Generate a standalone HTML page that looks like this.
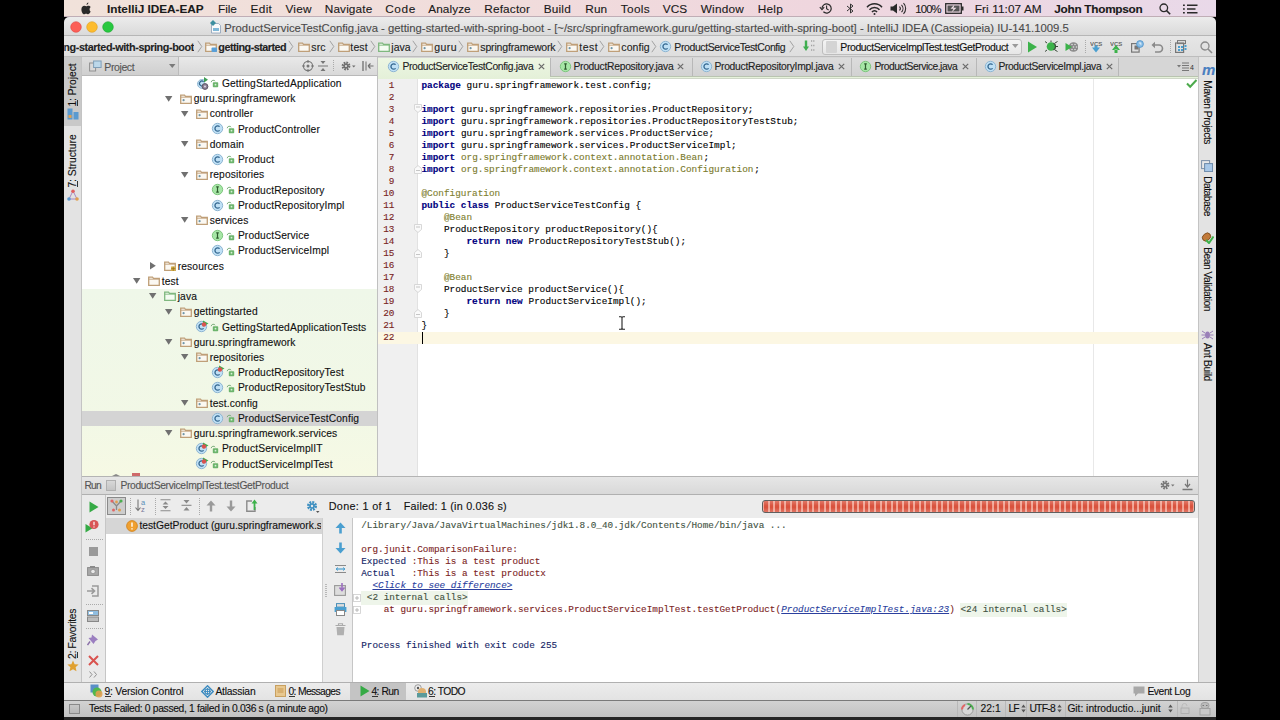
<!DOCTYPE html>
<html><head><meta charset="utf-8"><style>
html,body{margin:0;padding:0;}
body{width:1280px;height:720px;background:#000;position:relative;overflow:hidden;}
body div, body svg{position:absolute;}
.t{white-space:pre;z-index:2;-webkit-text-stroke:0.12px currentColor;}
body svg{z-index:3;}
</style></head><body>
<div style="left:64px;top:717px;width:1152px;height:3px;background:#262626;"></div>
<div style="left:64px;top:0px;width:1152px;height:17px;background:linear-gradient(90deg,#f1e2da 0%,#f1dcdc 40%,#efd6de 65%,#e9d9e9 100%);"></div>
<div style="left:64px;top:16px;width:1152px;height:1px;background:#c0aeb6;"></div>
<div style="left:64px;top:17px;width:1152px;height:19px;background:linear-gradient(#ececec,#d9d9d9);border-radius:5px 5px 0 0;"></div>
<div style="left:64px;top:35px;width:1152px;height:1px;background:#b6b6b6;"></div>
<div style="left:64px;top:36px;width:1152px;height:21px;background:linear-gradient(#e6e6e6,#dedede);"></div>
<div style="left:64px;top:56px;width:1152px;height:1px;background:#bdbdbd;"></div>
<div style="left:64px;top:57px;width:18px;height:625px;background:#e3e3e3;"></div>
<div style="left:81px;top:57px;width:1px;height:625px;background:#c4c4c4;"></div>
<div style="left:64px;top:57px;width:17px;height:69px;background:#c9c9c9;"></div>
<div style="left:1198px;top:57px;width:18px;height:625px;background:#e3e3e3;"></div>
<div style="left:1198px;top:57px;width:1px;height:625px;background:#c4c4c4;"></div>
<div style="left:82px;top:57px;width:296px;height:18px;background:linear-gradient(#e9e9e9,#d9d9d9);"></div>
<div style="left:82px;top:75px;width:296px;height:1px;background:#b9b9b9;"></div>
<div style="left:82px;top:57px;width:96px;height:18px;background:linear-gradient(#dedede,#cfcfcf);"></div>
<div style="left:178px;top:57px;width:1px;height:18px;background:#bcbcbc;"></div>
<div style="left:82px;top:76px;width:296px;height:400px;background:#ffffff;"></div>
<div style="left:82px;top:288.5px;width:296px;height:187.5px;background:linear-gradient(#eff7e9,#f2f8e6 70%,#f6f9e4);"></div>
<div style="left:82px;top:411.2px;width:296px;height:15.2px;background:#d4d4d4;"></div>
<div style="left:377px;top:57px;width:1px;height:420px;background:#c0c0c0;"></div>
<div style="left:378px;top:57px;width:820px;height:19px;background:#d6d6d6;"></div>
<div style="left:378px;top:76px;width:820px;height:3px;background:#e7f2dc;"></div>
<div style="left:378px;top:78px;width:820px;height:1px;background:#cfd7c8;"></div>
<div style="left:378px;top:79px;width:820px;height:397px;background:#ffffff;"></div>
<div style="left:378px;top:79px;width:39.5px;height:397px;background:#f0f0f0;"></div>
<div style="left:417px;top:79px;width:1px;height:397px;background:#e2e2e2;"></div>
<div style="left:1093px;top:79px;width:1px;height:397px;background:#e8e8e8;"></div>
<div style="left:378px;top:331.5px;width:820px;height:12.5px;background:#fcf7e3;"></div>
<div style="left:82px;top:476px;width:1116px;height:1px;background:#b4b4b4;"></div>
<div style="left:82px;top:477px;width:1116px;height:17.5px;background:linear-gradient(#e6e6e6,#d8d8d8);"></div>
<div style="left:82px;top:494px;width:1116px;height:1px;background:#b0b0b0;"></div>
<div style="left:82px;top:495px;width:23px;height:187px;background:#eaeaea;"></div>
<div style="left:105px;top:495px;width:1px;height:187px;background:#c6c6c6;"></div>
<div style="left:106px;top:495px;width:1092px;height:23px;background:#ececec;"></div>
<div style="left:106px;top:518px;width:216px;height:164px;background:#ffffff;"></div>
<div style="left:106px;top:518px;width:216px;height:15.5px;background:#d6d6d6;"></div>
<div style="left:322px;top:518px;width:1px;height:164px;background:#cfcfcf;"></div>
<div style="left:323px;top:518px;width:30px;height:164px;background:#ececec;"></div>
<div style="left:352px;top:518px;width:1px;height:164px;background:#c6c6c6;"></div>
<div style="left:353px;top:518px;width:845px;height:164px;background:#ffffff;"></div>
<div style="left:64px;top:682px;width:1152px;height:1px;background:#b0b0b0;"></div>
<div style="left:64px;top:683px;width:1152px;height:17px;background:linear-gradient(#ececec,#e3e3e3);"></div>
<div style="left:350px;top:683px;width:56px;height:17px;background:#c4c4c4;"></div>
<div style="left:64px;top:700px;width:1152px;height:1px;background:#7a7a7a;"></div>
<div style="left:64px;top:701px;width:1152px;height:16px;background:linear-gradient(#d2d2d2,#c2c2c2);"></div>
<div class="t" style="left:106.99px;top:2.40px;font-family:'Liberation Sans', sans-serif;font-size:11.8px;line-height:14px;color:#1a1a1a;font-weight:700;letter-spacing:-0.019px;">IntelliJ IDEA-EAP</div>
<div class="t" style="left:217.99px;top:2.40px;font-family:'Liberation Sans', sans-serif;font-size:11.8px;line-height:14px;color:#1a1a1a;letter-spacing:-0.033px;">File</div>
<div class="t" style="left:250.49px;top:2.40px;font-family:'Liberation Sans', sans-serif;font-size:11.8px;line-height:14px;color:#1a1a1a;letter-spacing:0.363px;">Edit</div>
<div class="t" style="left:285.49px;top:2.40px;font-family:'Liberation Sans', sans-serif;font-size:11.8px;line-height:14px;color:#1a1a1a;letter-spacing:0.186px;">View</div>
<div class="t" style="left:324.79px;top:2.40px;font-family:'Liberation Sans', sans-serif;font-size:11.8px;line-height:14px;color:#1a1a1a;letter-spacing:0.122px;">Navigate</div>
<div class="t" style="left:385.29px;top:2.40px;font-family:'Liberation Sans', sans-serif;font-size:11.8px;line-height:14px;color:#1a1a1a;letter-spacing:0.571px;">Code</div>
<div class="t" style="left:428.29px;top:2.40px;font-family:'Liberation Sans', sans-serif;font-size:11.8px;line-height:14px;color:#1a1a1a;letter-spacing:0.072px;">Analyze</div>
<div class="t" style="left:484.29px;top:2.40px;font-family:'Liberation Sans', sans-serif;font-size:11.8px;line-height:14px;color:#1a1a1a;letter-spacing:0.160px;">Refactor</div>
<div class="t" style="left:543.79px;top:2.40px;font-family:'Liberation Sans', sans-serif;font-size:11.8px;line-height:14px;color:#1a1a1a;letter-spacing:0.170px;">Build</div>
<div class="t" style="left:585.29px;top:2.40px;font-family:'Liberation Sans', sans-serif;font-size:11.8px;line-height:14px;color:#1a1a1a;letter-spacing:0.130px;">Run</div>
<div class="t" style="left:620.79px;top:2.40px;font-family:'Liberation Sans', sans-serif;font-size:11.8px;line-height:14px;color:#1a1a1a;letter-spacing:0.342px;">Tools</div>
<div class="t" style="left:662.79px;top:2.40px;font-family:'Liberation Sans', sans-serif;font-size:11.8px;line-height:14px;color:#1a1a1a;letter-spacing:0.075px;">VCS</div>
<div class="t" style="left:700.79px;top:2.40px;font-family:'Liberation Sans', sans-serif;font-size:11.8px;line-height:14px;color:#1a1a1a;letter-spacing:0.189px;">Window</div>
<div class="t" style="left:757.79px;top:2.40px;font-family:'Liberation Sans', sans-serif;font-size:11.8px;line-height:14px;color:#1a1a1a;letter-spacing:0.217px;">Help</div>
<div class="t" style="left:915.32px;top:2.40px;font-family:'Liberation Sans', sans-serif;font-size:11.3px;line-height:14px;color:#1a1a1a;letter-spacing:-0.850px;">100%</div>
<div class="t" style="left:974.79px;top:2.40px;font-family:'Liberation Sans', sans-serif;font-size:11.8px;line-height:14px;color:#1a1a1a;letter-spacing:0.083px;">Fri 11:07 AM</div>
<div class="t" style="left:1054.29px;top:2.40px;font-family:'Liberation Sans', sans-serif;font-size:11.8px;line-height:14px;color:#1a1a1a;font-weight:700;letter-spacing:-0.278px;">John Thompson</div>
<div class="t" style="left:224.32px;top:20.70px;font-family:'Liberation Sans', sans-serif;font-size:11.3px;line-height:14px;color:#4a4a4a;letter-spacing:-0.006px;">ProductServiceTestConfig.java - getting-started-with-spring-boot - [~/src/springframework.guru/getting-started-with-spring-boot] - IntelliJ IDEA (Cassiopeia) IU-141.1009.5</div>
<div class="t" style="left:63.35px;top:39.60px;font-family:'Liberation Sans', sans-serif;font-size:10.8px;line-height:14px;color:#222;font-weight:700;letter-spacing:-0.406px;clip-path:inset(0 0 0 1px);">ng-started-with-spring-boot</div>
<div class="t" style="left:218.35px;top:39.60px;font-family:'Liberation Sans', sans-serif;font-size:10.8px;line-height:14px;color:#222;font-weight:700;letter-spacing:-0.521px;">getting-started</div>
<div class="t" style="left:311.37px;top:39.60px;font-family:'Liberation Sans', sans-serif;font-size:10.5px;line-height:14px;color:#222;letter-spacing:0.130px;">src</div>
<div class="t" style="left:350.37px;top:39.60px;font-family:'Liberation Sans', sans-serif;font-size:10.5px;line-height:14px;color:#222;letter-spacing:0.107px;">test</div>
<div class="t" style="left:391.37px;top:39.60px;font-family:'Liberation Sans', sans-serif;font-size:10.5px;line-height:14px;color:#222;letter-spacing:-0.002px;">java</div>
<div class="t" style="left:434.37px;top:39.60px;font-family:'Liberation Sans', sans-serif;font-size:10.5px;line-height:14px;color:#222;letter-spacing:0.415px;">guru</div>
<div class="t" style="left:480.37px;top:39.60px;font-family:'Liberation Sans', sans-serif;font-size:10.5px;line-height:14px;color:#222;letter-spacing:-0.168px;">springframework</div>
<div class="t" style="left:579.37px;top:39.60px;font-family:'Liberation Sans', sans-serif;font-size:10.5px;line-height:14px;color:#222;letter-spacing:0.441px;">test</div>
<div class="t" style="left:621.37px;top:39.60px;font-family:'Liberation Sans', sans-serif;font-size:10.5px;line-height:14px;color:#222;letter-spacing:0.046px;">config</div>
<div class="t" style="left:674.37px;top:39.60px;font-family:'Liberation Sans', sans-serif;font-size:10.5px;line-height:14px;color:#222;letter-spacing:-0.415px;">ProductServiceTestConfig</div>
<div class="t" style="left:840.37px;top:39.60px;font-family:'Liberation Sans', sans-serif;font-size:10.5px;line-height:14px;color:#111;letter-spacing:-0.416px;">ProductServiceImplTest.testGetProduct</div>
<div class="t" style="left:104.37px;top:59.70px;font-family:'Liberation Sans', sans-serif;font-size:10.5px;line-height:14px;color:#555;letter-spacing:-0.405px;">Project</div>
<div class="t" style="left:402.38px;top:60.00px;font-family:'Liberation Sans', sans-serif;font-size:10.3px;line-height:14px;color:#222;letter-spacing:-0.321px;">ProductServiceTestConfig.java</div>
<div class="t" style="left:573.38px;top:60.00px;font-family:'Liberation Sans', sans-serif;font-size:10.3px;line-height:14px;color:#222;letter-spacing:-0.260px;">ProductRepository.java</div>
<div class="t" style="left:714.38px;top:60.00px;font-family:'Liberation Sans', sans-serif;font-size:10.3px;line-height:14px;color:#222;letter-spacing:-0.267px;">ProductRepositoryImpl.java</div>
<div class="t" style="left:874.38px;top:60.00px;font-family:'Liberation Sans', sans-serif;font-size:10.3px;line-height:14px;color:#222;letter-spacing:-0.463px;">ProductService.java</div>
<div class="t" style="left:998.38px;top:60.00px;font-family:'Liberation Sans', sans-serif;font-size:10.3px;line-height:14px;color:#222;letter-spacing:-0.354px;">ProductServiceImpl.java</div>
<div class="t" style="left:221.88px;top:77.00px;font-family:'Liberation Sans', sans-serif;font-size:10.25px;line-height:14px;color:#111;letter-spacing:0.14px;">GettingStartedApplication</div>
<div class="t" style="left:193.69px;top:92.22px;font-family:'Liberation Sans', sans-serif;font-size:10.25px;line-height:14px;color:#111;letter-spacing:0.14px;">guru.springframework</div>
<div class="t" style="left:209.69px;top:107.44px;font-family:'Liberation Sans', sans-serif;font-size:10.25px;line-height:14px;color:#111;letter-spacing:0.14px;">controller</div>
<div class="t" style="left:237.88px;top:122.66px;font-family:'Liberation Sans', sans-serif;font-size:10.25px;line-height:14px;color:#111;letter-spacing:0.14px;">ProductController</div>
<div class="t" style="left:209.69px;top:137.88px;font-family:'Liberation Sans', sans-serif;font-size:10.25px;line-height:14px;color:#111;letter-spacing:0.14px;">domain</div>
<div class="t" style="left:237.88px;top:153.10px;font-family:'Liberation Sans', sans-serif;font-size:10.25px;line-height:14px;color:#111;letter-spacing:0.14px;">Product</div>
<div class="t" style="left:209.69px;top:168.32px;font-family:'Liberation Sans', sans-serif;font-size:10.25px;line-height:14px;color:#111;letter-spacing:0.14px;">repositories</div>
<div class="t" style="left:237.88px;top:183.54px;font-family:'Liberation Sans', sans-serif;font-size:10.25px;line-height:14px;color:#111;letter-spacing:0.14px;">ProductRepository</div>
<div class="t" style="left:237.88px;top:198.76px;font-family:'Liberation Sans', sans-serif;font-size:10.25px;line-height:14px;color:#111;letter-spacing:0.14px;">ProductRepositoryImpl</div>
<div class="t" style="left:209.69px;top:213.98px;font-family:'Liberation Sans', sans-serif;font-size:10.25px;line-height:14px;color:#111;letter-spacing:0.14px;">services</div>
<div class="t" style="left:237.88px;top:229.20px;font-family:'Liberation Sans', sans-serif;font-size:10.25px;line-height:14px;color:#111;letter-spacing:0.14px;">ProductService</div>
<div class="t" style="left:237.88px;top:244.42px;font-family:'Liberation Sans', sans-serif;font-size:10.25px;line-height:14px;color:#111;letter-spacing:0.14px;">ProductServiceImpl</div>
<div class="t" style="left:177.69px;top:259.64px;font-family:'Liberation Sans', sans-serif;font-size:10.25px;line-height:14px;color:#111;letter-spacing:0.14px;">resources</div>
<div class="t" style="left:161.69px;top:274.86px;font-family:'Liberation Sans', sans-serif;font-size:10.25px;line-height:14px;color:#111;letter-spacing:0.14px;">test</div>
<div class="t" style="left:177.69px;top:290.08px;font-family:'Liberation Sans', sans-serif;font-size:10.25px;line-height:14px;color:#111;letter-spacing:0.14px;">java</div>
<div class="t" style="left:193.69px;top:305.30px;font-family:'Liberation Sans', sans-serif;font-size:10.25px;line-height:14px;color:#111;letter-spacing:0.14px;">gettingstarted</div>
<div class="t" style="left:221.88px;top:320.52px;font-family:'Liberation Sans', sans-serif;font-size:10.25px;line-height:14px;color:#111;letter-spacing:0.14px;">GettingStartedApplicationTests</div>
<div class="t" style="left:193.69px;top:335.74px;font-family:'Liberation Sans', sans-serif;font-size:10.25px;line-height:14px;color:#111;letter-spacing:0.14px;">guru.springframework</div>
<div class="t" style="left:209.69px;top:350.96px;font-family:'Liberation Sans', sans-serif;font-size:10.25px;line-height:14px;color:#111;letter-spacing:0.14px;">repositories</div>
<div class="t" style="left:237.88px;top:366.18px;font-family:'Liberation Sans', sans-serif;font-size:10.25px;line-height:14px;color:#111;letter-spacing:0.14px;">ProductRepositoryTest</div>
<div class="t" style="left:237.88px;top:381.40px;font-family:'Liberation Sans', sans-serif;font-size:10.25px;line-height:14px;color:#111;letter-spacing:0.14px;">ProductRepositoryTestStub</div>
<div class="t" style="left:209.69px;top:396.62px;font-family:'Liberation Sans', sans-serif;font-size:10.25px;line-height:14px;color:#111;letter-spacing:0.14px;">test.config</div>
<div class="t" style="left:237.88px;top:411.84px;font-family:'Liberation Sans', sans-serif;font-size:10.25px;line-height:14px;color:#111;letter-spacing:0.14px;">ProductServiceTestConfig</div>
<div class="t" style="left:193.69px;top:427.06px;font-family:'Liberation Sans', sans-serif;font-size:10.25px;line-height:14px;color:#111;letter-spacing:0.14px;">guru.springframework.services</div>
<div class="t" style="left:221.88px;top:442.28px;font-family:'Liberation Sans', sans-serif;font-size:10.25px;line-height:14px;color:#111;letter-spacing:0.14px;">ProductServiceImplIT</div>
<div class="t" style="left:221.88px;top:457.50px;font-family:'Liberation Sans', sans-serif;font-size:10.25px;line-height:14px;color:#111;letter-spacing:0.14px;">ProductServiceImplTest</div>
<div class="t" style="left:421.44px;top:78.99px;font-family:'Liberation Mono', monospace;font-size:9.4px;line-height:14px;color:#000080;font-weight:700;">package</div>
<div class="t" style="left:460.92px;top:78.99px;font-family:'Liberation Mono', monospace;font-size:9.4px;line-height:14px;color:#000;"> guru.springframework.test.config;</div>
<div class="t" style="left:388.84px;top:78.99px;font-family:'Liberation Mono', monospace;font-size:9.33px;line-height:14px;color:#7a2424;">1</div>
<div class="t" style="left:388.84px;top:90.99px;font-family:'Liberation Mono', monospace;font-size:9.33px;line-height:14px;color:#7a2424;">2</div>
<div class="t" style="left:421.44px;top:102.99px;font-family:'Liberation Mono', monospace;font-size:9.4px;line-height:14px;color:#000080;font-weight:700;">import</div>
<div class="t" style="left:455.28px;top:102.99px;font-family:'Liberation Mono', monospace;font-size:9.4px;line-height:14px;color:#000;"> guru.springframework.repositories.ProductRepository;</div>
<div class="t" style="left:388.84px;top:102.99px;font-family:'Liberation Mono', monospace;font-size:9.33px;line-height:14px;color:#7a2424;">3</div>
<div class="t" style="left:421.44px;top:114.99px;font-family:'Liberation Mono', monospace;font-size:9.4px;line-height:14px;color:#000080;font-weight:700;">import</div>
<div class="t" style="left:455.28px;top:114.99px;font-family:'Liberation Mono', monospace;font-size:9.4px;line-height:14px;color:#000;"> guru.springframework.repositories.ProductRepositoryTestStub;</div>
<div class="t" style="left:388.84px;top:114.99px;font-family:'Liberation Mono', monospace;font-size:9.33px;line-height:14px;color:#7a2424;">4</div>
<div class="t" style="left:421.44px;top:126.99px;font-family:'Liberation Mono', monospace;font-size:9.4px;line-height:14px;color:#000080;font-weight:700;">import</div>
<div class="t" style="left:455.28px;top:126.99px;font-family:'Liberation Mono', monospace;font-size:9.4px;line-height:14px;color:#000;"> guru.springframework.services.ProductService;</div>
<div class="t" style="left:388.84px;top:126.99px;font-family:'Liberation Mono', monospace;font-size:9.33px;line-height:14px;color:#7a2424;">5</div>
<div class="t" style="left:421.44px;top:138.99px;font-family:'Liberation Mono', monospace;font-size:9.4px;line-height:14px;color:#000080;font-weight:700;">import</div>
<div class="t" style="left:455.28px;top:138.99px;font-family:'Liberation Mono', monospace;font-size:9.4px;line-height:14px;color:#000;"> guru.springframework.services.ProductServiceImpl;</div>
<div class="t" style="left:388.84px;top:138.99px;font-family:'Liberation Mono', monospace;font-size:9.33px;line-height:14px;color:#7a2424;">6</div>
<div class="t" style="left:421.44px;top:150.99px;font-family:'Liberation Mono', monospace;font-size:9.4px;line-height:14px;color:#000080;font-weight:700;">import</div>
<div class="t" style="left:455.28px;top:150.99px;font-family:'Liberation Mono', monospace;font-size:9.4px;line-height:14px;color:#7a7a2c;"> org.springframework.context.annotation.Bean</div>
<div class="t" style="left:703.44px;top:150.99px;font-family:'Liberation Mono', monospace;font-size:9.4px;line-height:14px;color:#000;">;</div>
<div class="t" style="left:388.84px;top:150.99px;font-family:'Liberation Mono', monospace;font-size:9.33px;line-height:14px;color:#7a2424;">7</div>
<div class="t" style="left:421.44px;top:162.99px;font-family:'Liberation Mono', monospace;font-size:9.4px;line-height:14px;color:#000080;font-weight:700;">import</div>
<div class="t" style="left:455.28px;top:162.99px;font-family:'Liberation Mono', monospace;font-size:9.4px;line-height:14px;color:#7a7a2c;"> org.springframework.context.annotation.Configuration</div>
<div class="t" style="left:754.20px;top:162.99px;font-family:'Liberation Mono', monospace;font-size:9.4px;line-height:14px;color:#000;">;</div>
<div class="t" style="left:388.84px;top:162.99px;font-family:'Liberation Mono', monospace;font-size:9.33px;line-height:14px;color:#7a2424;">8</div>
<div class="t" style="left:388.84px;top:174.99px;font-family:'Liberation Mono', monospace;font-size:9.33px;line-height:14px;color:#7a2424;">9</div>
<div class="t" style="left:421.44px;top:186.99px;font-family:'Liberation Mono', monospace;font-size:9.4px;line-height:14px;color:#808030;">@Configuration</div>
<div class="t" style="left:383.24px;top:186.99px;font-family:'Liberation Mono', monospace;font-size:9.33px;line-height:14px;color:#7a2424;">10</div>
<div class="t" style="left:421.44px;top:198.99px;font-family:'Liberation Mono', monospace;font-size:9.4px;line-height:14px;color:#000080;font-weight:700;">public class</div>
<div class="t" style="left:489.12px;top:198.99px;font-family:'Liberation Mono', monospace;font-size:9.4px;line-height:14px;color:#000;"> ProductServiceTestConfig {</div>
<div class="t" style="left:383.24px;top:198.99px;font-family:'Liberation Mono', monospace;font-size:9.33px;line-height:14px;color:#7a2424;">11</div>
<div class="t" style="left:421.44px;top:210.99px;font-family:'Liberation Mono', monospace;font-size:9.4px;line-height:14px;color:#808030;">    @Bean</div>
<div class="t" style="left:383.24px;top:210.99px;font-family:'Liberation Mono', monospace;font-size:9.33px;line-height:14px;color:#7a2424;">12</div>
<div class="t" style="left:421.44px;top:222.99px;font-family:'Liberation Mono', monospace;font-size:9.4px;line-height:14px;color:#000;">    ProductRepository productRepository(){</div>
<div class="t" style="left:383.24px;top:222.99px;font-family:'Liberation Mono', monospace;font-size:9.33px;line-height:14px;color:#7a2424;">13</div>
<div class="t" style="left:421.44px;top:234.99px;font-family:'Liberation Mono', monospace;font-size:9.4px;line-height:14px;color:#000080;font-weight:700;">        return new</div>
<div class="t" style="left:522.96px;top:234.99px;font-family:'Liberation Mono', monospace;font-size:9.4px;line-height:14px;color:#000;"> ProductRepositoryTestStub();</div>
<div class="t" style="left:383.24px;top:234.99px;font-family:'Liberation Mono', monospace;font-size:9.33px;line-height:14px;color:#7a2424;">14</div>
<div class="t" style="left:421.44px;top:246.99px;font-family:'Liberation Mono', monospace;font-size:9.4px;line-height:14px;color:#000;">    }</div>
<div class="t" style="left:383.24px;top:246.99px;font-family:'Liberation Mono', monospace;font-size:9.33px;line-height:14px;color:#7a2424;">15</div>
<div class="t" style="left:383.24px;top:258.99px;font-family:'Liberation Mono', monospace;font-size:9.33px;line-height:14px;color:#7a2424;">16</div>
<div class="t" style="left:421.44px;top:270.99px;font-family:'Liberation Mono', monospace;font-size:9.4px;line-height:14px;color:#808030;">    @Bean</div>
<div class="t" style="left:383.24px;top:270.99px;font-family:'Liberation Mono', monospace;font-size:9.33px;line-height:14px;color:#7a2424;">17</div>
<div class="t" style="left:421.44px;top:282.99px;font-family:'Liberation Mono', monospace;font-size:9.4px;line-height:14px;color:#000;">    ProductService productService(){</div>
<div class="t" style="left:383.24px;top:282.99px;font-family:'Liberation Mono', monospace;font-size:9.33px;line-height:14px;color:#7a2424;">18</div>
<div class="t" style="left:421.44px;top:294.99px;font-family:'Liberation Mono', monospace;font-size:9.4px;line-height:14px;color:#000080;font-weight:700;">        return new</div>
<div class="t" style="left:522.96px;top:294.99px;font-family:'Liberation Mono', monospace;font-size:9.4px;line-height:14px;color:#000;"> ProductServiceImpl();</div>
<div class="t" style="left:383.24px;top:294.99px;font-family:'Liberation Mono', monospace;font-size:9.33px;line-height:14px;color:#7a2424;">19</div>
<div class="t" style="left:421.44px;top:306.99px;font-family:'Liberation Mono', monospace;font-size:9.4px;line-height:14px;color:#000;">    }</div>
<div class="t" style="left:383.24px;top:306.99px;font-family:'Liberation Mono', monospace;font-size:9.33px;line-height:14px;color:#7a2424;">20</div>
<div class="t" style="left:421.44px;top:318.99px;font-family:'Liberation Mono', monospace;font-size:9.4px;line-height:14px;color:#000;">}</div>
<div class="t" style="left:383.24px;top:318.99px;font-family:'Liberation Mono', monospace;font-size:9.33px;line-height:14px;color:#7a2424;">21</div>
<div class="t" style="left:383.24px;top:330.99px;font-family:'Liberation Mono', monospace;font-size:9.33px;line-height:14px;color:#7a2424;">22</div>
<div style="left:421.5px;top:332px;width:1.5px;height:12px;background:#000;"></div>
<div class="t" style="left:84.38px;top:479.20px;font-family:'Liberation Sans', sans-serif;font-size:10.3px;line-height:14px;color:#555;letter-spacing:-0.827px;">Run</div>
<div class="t" style="left:120.38px;top:479.20px;font-family:'Liberation Sans', sans-serif;font-size:10.3px;line-height:14px;color:#555;letter-spacing:-0.319px;">ProductServiceImplTest.testGetProduct</div>
<div class="t" style="left:328.75px;top:499.30px;font-family:'Liberation Sans', sans-serif;font-size:10.8px;line-height:14px;color:#111;letter-spacing:0.324px;">Done: 1 of 1</div>
<div class="t" style="left:403.75px;top:499.30px;font-family:'Liberation Sans', sans-serif;font-size:10.8px;line-height:14px;color:#111;letter-spacing:0.213px;">Failed: 1 (in 0.036 s)</div>
<div class="t" style="left:139.38px;top:519.30px;font-family:'Liberation Sans', sans-serif;font-size:10.3px;line-height:14px;color:#111;width:182px;overflow:hidden;">testGetProduct (guru.springframework.services.ProductServiceImplTest)</div>
<div class="t" style="left:361.24px;top:519.29px;font-family:'Liberation Mono', monospace;font-size:9.33px;line-height:14px;color:#435343;">/Library/Java/JavaVirtualMachines/jdk1.8.0_40.jdk/Contents/Home/bin/java ...</div>
<div class="t" style="left:361.24px;top:543.25px;font-family:'Liberation Mono', monospace;font-size:9.33px;line-height:14px;color:#7d1f1f;">org.junit.ComparisonFailure:</div>
<div class="t" style="left:361.24px;top:555.23px;font-family:'Liberation Mono', monospace;font-size:9.33px;line-height:14px;color:#151f66;">Expected </div>
<div class="t" style="left:411.64px;top:555.23px;font-family:'Liberation Mono', monospace;font-size:9.33px;line-height:14px;color:#7d1f1f;">:This is a test product</div>
<div class="t" style="left:361.24px;top:567.21px;font-family:'Liberation Mono', monospace;font-size:9.33px;line-height:14px;color:#151f66;">Actual   </div>
<div class="t" style="left:411.64px;top:567.21px;font-family:'Liberation Mono', monospace;font-size:9.33px;line-height:14px;color:#7d1f1f;">:This is a test productx</div>
<div class="t" style="left:361.24px;top:579.19px;font-family:'Liberation Mono', monospace;font-size:9.33px;line-height:14px;color:#7d1f1f;">  </div>
<div class="t" style="left:372.44px;top:579.19px;font-family:'Liberation Mono', monospace;font-size:9.33px;line-height:14px;color:#2b3f9e;font-style:italic;text-decoration:underline;">&lt;Click to see difference&gt;</div>
<div class="t" style="left:361.24px;top:591.17px;font-family:'Liberation Mono', monospace;font-size:9.33px;line-height:14px;color:#435343;background:#eef5ea;"> &lt;2 internal calls&gt;</div>
<div class="t" style="left:361.24px;top:603.15px;font-family:'Liberation Mono', monospace;font-size:9.33px;line-height:14px;color:#7d1f1f;">    at guru.springframework.services.ProductServiceImplTest.testGetProduct(</div>
<div class="t" style="left:781.24px;top:603.15px;font-family:'Liberation Mono', monospace;font-size:9.33px;line-height:14px;color:#2b3f9e;font-style:italic;text-decoration:underline;">ProductServiceImplTest.java:23</div>
<div class="t" style="left:949.24px;top:603.15px;font-family:'Liberation Mono', monospace;font-size:9.33px;line-height:14px;color:#7d1f1f;">)</div>
<div class="t" style="left:954.84px;top:603.15px;font-family:'Liberation Mono', monospace;font-size:9.33px;line-height:14px;color:#7d1f1f;"> </div>
<div class="t" style="left:960.44px;top:603.15px;font-family:'Liberation Mono', monospace;font-size:9.33px;line-height:14px;color:#435343;background:#eef5ea;">&lt;24 internal calls&gt;</div>
<div class="t" style="left:361.24px;top:639.09px;font-family:'Liberation Mono', monospace;font-size:9.33px;line-height:14px;color:#151f66;">Process finished with exit code 255</div>
<div class="t" style="left:104.38px;top:684.70px;font-family:'Liberation Sans', sans-serif;font-size:10.3px;line-height:14px;color:#111;letter-spacing:-0.154px;">9: Version Control</div>
<div class="t" style="left:215.38px;top:684.70px;font-family:'Liberation Sans', sans-serif;font-size:10.3px;line-height:14px;color:#111;letter-spacing:-0.193px;">Atlassian</div>
<div class="t" style="left:288.38px;top:684.70px;font-family:'Liberation Sans', sans-serif;font-size:10.3px;line-height:14px;color:#111;letter-spacing:-0.615px;">0: Messages</div>
<div class="t" style="left:371.38px;top:684.70px;font-family:'Liberation Sans', sans-serif;font-size:10.3px;line-height:14px;color:#111;letter-spacing:-0.482px;">4: Run</div>
<div class="t" style="left:428.08px;top:684.70px;font-family:'Liberation Sans', sans-serif;font-size:10.3px;line-height:14px;color:#111;letter-spacing:-0.549px;">6: TODO</div>
<div class="t" style="left:1147.38px;top:684.70px;font-family:'Liberation Sans', sans-serif;font-size:10.3px;line-height:14px;color:#111;letter-spacing:-0.392px;">Event Log</div>
<div class="t" style="left:88.88px;top:702.30px;font-family:'Liberation Sans', sans-serif;font-size:10.3px;line-height:14px;color:#111;letter-spacing:-0.334px;">Tests Failed: 0 passed, 1 failed in 0.036 s (a minute ago)</div>
<div class="t" style="left:980.38px;top:702.30px;font-family:'Liberation Sans', sans-serif;font-size:10.3px;line-height:14px;color:#111;letter-spacing:0.063px;">22:1</div>
<div class="t" style="left:1008.38px;top:702.30px;font-family:'Liberation Sans', sans-serif;font-size:10.3px;line-height:14px;color:#111;letter-spacing:-0.795px;">LF</div>
<div class="t" style="left:1029.38px;top:702.30px;font-family:'Liberation Sans', sans-serif;font-size:10.3px;line-height:14px;color:#111;letter-spacing:-0.734px;">UTF-8</div>
<div class="t" style="left:1067.38px;top:702.30px;font-family:'Liberation Sans', sans-serif;font-size:10.3px;line-height:14px;color:#111;letter-spacing:-0.027px;">Git: introductio...junit</div>
<div class="t" style="left:73px;top:85.00px;font-family:'Liberation Sans', sans-serif;font-size:10.3px;line-height:14px;color:#111;transform:translate(-50%,-50%) rotate(-90deg);letter-spacing:-0.029px;">1: Project</div>
<div class="t" style="left:73px;top:161.00px;font-family:'Liberation Sans', sans-serif;font-size:10.3px;line-height:14px;color:#111;transform:translate(-50%,-50%) rotate(-90deg);letter-spacing:0.000px;">7: Structure</div>
<div class="t" style="left:73px;top:633.50px;font-family:'Liberation Sans', sans-serif;font-size:10.3px;line-height:14px;color:#111;transform:translate(-50%,-50%) rotate(-90deg);letter-spacing:-0.324px;">2: Favorites</div>
<div class="t" style="left:1207px;top:111.50px;font-family:'Liberation Sans', sans-serif;font-size:10.3px;line-height:14px;color:#111;transform:translate(-50%,-50%) rotate(90deg);letter-spacing:-0.518px;">Maven Projects</div>
<div class="t" style="left:1207px;top:195.50px;font-family:'Liberation Sans', sans-serif;font-size:10.3px;line-height:14px;color:#111;transform:translate(-50%,-50%) rotate(90deg);letter-spacing:-0.551px;">Database</div>
<div class="t" style="left:1207px;top:278.50px;font-family:'Liberation Sans', sans-serif;font-size:10.3px;line-height:14px;color:#111;transform:translate(-50%,-50%) rotate(90deg);letter-spacing:-0.510px;">Bean Validation</div>
<div class="t" style="left:1207px;top:361.50px;font-family:'Liberation Sans', sans-serif;font-size:10.3px;line-height:14px;color:#111;transform:translate(-50%,-50%) rotate(90deg);letter-spacing:-0.373px;">Ant Build</div>
<svg style="left:195.5px;top:77.3px;" width="14" height="14" viewBox="0 0 14 14"><path d="M8.8 3.6 A4.4 4.4 0 1 0 9.5 9.5" fill="#bfe0f5" stroke="#8fb6d2" stroke-width="1"/><path d="M7.6 4.8 A2.4 2.4 0 1 0 7.6 8.2" fill="none" stroke="#33668f" stroke-width="1.2"/><path d="M8 0 L12 2.8 L8 5.6 Z" fill="#3f9e55"/><circle cx="9" cy="9.5" r="2.9" fill="#8b7f95" stroke="#5f5568" stroke-width="1"/><circle cx="9" cy="9.5" r="1" fill="#e0d8e8"/></svg>
<svg style="left:209.5px;top:78.3px;" width="9" height="10" viewBox="0 0 9 10"><path d="M1.2 4.2 A2.2 2.2 0 0 1 5.2 3.2" fill="none" stroke="#7cae7c" stroke-width="1"/><rect x="2.8" y="4.2" width="5.4" height="5" rx="0.8" fill="#6cb46c"/><circle cx="5.5" cy="6.7" r="0.9" fill="#d8f0d8"/></svg>
<svg style="left:165px;top:95.52px;" width="8" height="6" viewBox="0 0 8 6"><path d="M0 0 H7.4 L3.7 5.8 Z" fill="#707070"/></svg>
<svg style="left:180px;top:93.52px;" width="12" height="10" viewBox="0 0 12 10"><path d="M0.7 1.2 H4.5 L5.5 2.4 H11.3 V9.3 H0.7 Z" fill="#fbf8f2" stroke="#bf9f78" stroke-width="1.3"/><path d="M0.7 3.2 H11.3" stroke="#bf9f78" stroke-width="0.9"/><circle cx="3.6" cy="6.2" r="1.1" fill="#6f95a8"/></svg>
<svg style="left:181px;top:110.74px;" width="8" height="6" viewBox="0 0 8 6"><path d="M0 0 H7.4 L3.7 5.8 Z" fill="#707070"/></svg>
<svg style="left:196px;top:108.74px;" width="12" height="10" viewBox="0 0 12 10"><path d="M0.7 1.2 H4.5 L5.5 2.4 H11.3 V9.3 H0.7 Z" fill="#fbf8f2" stroke="#bf9f78" stroke-width="1.3"/><path d="M0.7 3.2 H11.3" stroke="#bf9f78" stroke-width="0.9"/><circle cx="3.6" cy="6.2" r="1.1" fill="#6f95a8"/></svg>
<svg style="left:211.0px;top:122.46000000000001px;" width="13" height="13" viewBox="0 0 13 13"><circle cx="6.5" cy="6.5" r="5.2" fill="#bfe0f5" stroke="#8fb6d2" stroke-width="1"/><path d="M8.6 4.6 A2.7 2.7 0 1 0 8.6 8.4" fill="none" stroke="#33668f" stroke-width="1.3"/></svg>
<svg style="left:225.5px;top:123.96000000000001px;" width="9" height="10" viewBox="0 0 9 10"><path d="M1.2 4.2 A2.2 2.2 0 0 1 5.2 3.2" fill="none" stroke="#7cae7c" stroke-width="1"/><rect x="2.8" y="4.2" width="5.4" height="5" rx="0.8" fill="#6cb46c"/><circle cx="5.5" cy="6.7" r="0.9" fill="#d8f0d8"/></svg>
<svg style="left:181px;top:141.18px;" width="8" height="6" viewBox="0 0 8 6"><path d="M0 0 H7.4 L3.7 5.8 Z" fill="#707070"/></svg>
<svg style="left:196px;top:139.18px;" width="12" height="10" viewBox="0 0 12 10"><path d="M0.7 1.2 H4.5 L5.5 2.4 H11.3 V9.3 H0.7 Z" fill="#fbf8f2" stroke="#bf9f78" stroke-width="1.3"/><path d="M0.7 3.2 H11.3" stroke="#bf9f78" stroke-width="0.9"/><circle cx="3.6" cy="6.2" r="1.1" fill="#6f95a8"/></svg>
<svg style="left:211.0px;top:152.9px;" width="13" height="13" viewBox="0 0 13 13"><circle cx="6.5" cy="6.5" r="5.2" fill="#bfe0f5" stroke="#8fb6d2" stroke-width="1"/><path d="M8.6 4.6 A2.7 2.7 0 1 0 8.6 8.4" fill="none" stroke="#33668f" stroke-width="1.3"/></svg>
<svg style="left:225.5px;top:154.4px;" width="9" height="10" viewBox="0 0 9 10"><path d="M1.2 4.2 A2.2 2.2 0 0 1 5.2 3.2" fill="none" stroke="#7cae7c" stroke-width="1"/><rect x="2.8" y="4.2" width="5.4" height="5" rx="0.8" fill="#6cb46c"/><circle cx="5.5" cy="6.7" r="0.9" fill="#d8f0d8"/></svg>
<svg style="left:181px;top:171.62px;" width="8" height="6" viewBox="0 0 8 6"><path d="M0 0 H7.4 L3.7 5.8 Z" fill="#707070"/></svg>
<svg style="left:196px;top:169.62px;" width="12" height="10" viewBox="0 0 12 10"><path d="M0.7 1.2 H4.5 L5.5 2.4 H11.3 V9.3 H0.7 Z" fill="#fbf8f2" stroke="#bf9f78" stroke-width="1.3"/><path d="M0.7 3.2 H11.3" stroke="#bf9f78" stroke-width="0.9"/><circle cx="3.6" cy="6.2" r="1.1" fill="#6f95a8"/></svg>
<svg style="left:211.0px;top:183.34px;" width="13" height="13" viewBox="0 0 13 13"><circle cx="6.5" cy="6.5" r="5.2" fill="#a6e6a6" stroke="#80c680" stroke-width="1"/><path d="M6.5 3.8 V9.2 M5.2 3.9 H7.8 M5.2 9.1 H7.8" stroke="#2d5b2d" stroke-width="1.2"/></svg>
<svg style="left:225.5px;top:184.84px;" width="9" height="10" viewBox="0 0 9 10"><path d="M1.2 4.2 A2.2 2.2 0 0 1 5.2 3.2" fill="none" stroke="#7cae7c" stroke-width="1"/><rect x="2.8" y="4.2" width="5.4" height="5" rx="0.8" fill="#6cb46c"/><circle cx="5.5" cy="6.7" r="0.9" fill="#d8f0d8"/></svg>
<svg style="left:211.0px;top:198.56px;" width="13" height="13" viewBox="0 0 13 13"><circle cx="6.5" cy="6.5" r="5.2" fill="#bfe0f5" stroke="#8fb6d2" stroke-width="1"/><path d="M8.6 4.6 A2.7 2.7 0 1 0 8.6 8.4" fill="none" stroke="#33668f" stroke-width="1.3"/></svg>
<svg style="left:225.5px;top:200.06px;" width="9" height="10" viewBox="0 0 9 10"><path d="M1.2 4.2 A2.2 2.2 0 0 1 5.2 3.2" fill="none" stroke="#7cae7c" stroke-width="1"/><rect x="2.8" y="4.2" width="5.4" height="5" rx="0.8" fill="#6cb46c"/><circle cx="5.5" cy="6.7" r="0.9" fill="#d8f0d8"/></svg>
<svg style="left:181px;top:217.28000000000003px;" width="8" height="6" viewBox="0 0 8 6"><path d="M0 0 H7.4 L3.7 5.8 Z" fill="#707070"/></svg>
<svg style="left:196px;top:215.28000000000003px;" width="12" height="10" viewBox="0 0 12 10"><path d="M0.7 1.2 H4.5 L5.5 2.4 H11.3 V9.3 H0.7 Z" fill="#fbf8f2" stroke="#bf9f78" stroke-width="1.3"/><path d="M0.7 3.2 H11.3" stroke="#bf9f78" stroke-width="0.9"/><circle cx="3.6" cy="6.2" r="1.1" fill="#6f95a8"/></svg>
<svg style="left:211.0px;top:229.0px;" width="13" height="13" viewBox="0 0 13 13"><circle cx="6.5" cy="6.5" r="5.2" fill="#a6e6a6" stroke="#80c680" stroke-width="1"/><path d="M6.5 3.8 V9.2 M5.2 3.9 H7.8 M5.2 9.1 H7.8" stroke="#2d5b2d" stroke-width="1.2"/></svg>
<svg style="left:225.5px;top:230.5px;" width="9" height="10" viewBox="0 0 9 10"><path d="M1.2 4.2 A2.2 2.2 0 0 1 5.2 3.2" fill="none" stroke="#7cae7c" stroke-width="1"/><rect x="2.8" y="4.2" width="5.4" height="5" rx="0.8" fill="#6cb46c"/><circle cx="5.5" cy="6.7" r="0.9" fill="#d8f0d8"/></svg>
<svg style="left:211.0px;top:244.22000000000003px;" width="13" height="13" viewBox="0 0 13 13"><circle cx="6.5" cy="6.5" r="5.2" fill="#bfe0f5" stroke="#8fb6d2" stroke-width="1"/><path d="M8.6 4.6 A2.7 2.7 0 1 0 8.6 8.4" fill="none" stroke="#33668f" stroke-width="1.3"/></svg>
<svg style="left:225.5px;top:245.72000000000003px;" width="9" height="10" viewBox="0 0 9 10"><path d="M1.2 4.2 A2.2 2.2 0 0 1 5.2 3.2" fill="none" stroke="#7cae7c" stroke-width="1"/><rect x="2.8" y="4.2" width="5.4" height="5" rx="0.8" fill="#6cb46c"/><circle cx="5.5" cy="6.7" r="0.9" fill="#d8f0d8"/></svg>
<svg style="left:149.5px;top:262.24px;" width="6" height="8" viewBox="0 0 6 8"><path d="M0 0 V7.4 L5.8 3.7 Z" fill="#707070"/></svg>
<svg style="left:164px;top:260.94px;" width="12" height="10" viewBox="0 0 12 10"><path d="M0.7 1.2 H4.5 L5.5 2.4 H11.3 V9.3 H0.7 Z" fill="#fbf8f2" stroke="#bf9f78" stroke-width="1.3"/><path d="M0.7 3.2 H11.3" stroke="#bf9f78" stroke-width="0.9"/><rect x="7" y="5.5" width="4.5" height="4.5" fill="#d7b04a"/><path d="M7.2 7.7 H11.3 M9.2 5.6 V10" stroke="#8d6b1e" stroke-width="0.7"/></svg>
<svg style="left:133px;top:278.16px;" width="8" height="6" viewBox="0 0 8 6"><path d="M0 0 H7.4 L3.7 5.8 Z" fill="#707070"/></svg>
<svg style="left:148px;top:276.16px;" width="12" height="10" viewBox="0 0 12 10"><path d="M0.7 1.2 H4.5 L5.5 2.4 H11.3 V9.3 H0.7 Z" fill="#fbf8f2" stroke="#bf9f78" stroke-width="1.3"/><path d="M0.7 3.2 H11.3" stroke="#bf9f78" stroke-width="0.9"/></svg>
<svg style="left:149px;top:293.38px;" width="8" height="6" viewBox="0 0 8 6"><path d="M0 0 H7.4 L3.7 5.8 Z" fill="#707070"/></svg>
<svg style="left:164px;top:291.38px;" width="12" height="10" viewBox="0 0 12 10"><path d="M0.7 1.2 H4.5 L5.5 2.4 H11.3 V9.3 H0.7 Z" fill="#f4fbf2" stroke="#7fb87f" stroke-width="1.3"/><path d="M0.7 3.2 H11.3" stroke="#7fb87f" stroke-width="0.9"/></svg>
<svg style="left:165px;top:308.6px;" width="8" height="6" viewBox="0 0 8 6"><path d="M0 0 H7.4 L3.7 5.8 Z" fill="#707070"/></svg>
<svg style="left:180px;top:306.6px;" width="12" height="10" viewBox="0 0 12 10"><path d="M0.7 1.2 H4.5 L5.5 2.4 H11.3 V9.3 H0.7 Z" fill="#fbf8f2" stroke="#bf9f78" stroke-width="1.3"/><path d="M0.7 3.2 H11.3" stroke="#bf9f78" stroke-width="0.9"/><circle cx="3.6" cy="6.2" r="1.1" fill="#6f95a8"/></svg>
<svg style="left:195.0px;top:320.32px;" width="13" height="13" viewBox="0 0 13 13"><circle cx="6.5" cy="6.5" r="5.2" fill="#bfe0f5" stroke="#8fb6d2" stroke-width="1"/><path d="M8.6 4.6 A2.7 2.7 0 1 0 8.6 8.4" fill="none" stroke="#33668f" stroke-width="1.3"/></svg>
<svg style="left:200.5px;top:319.82px;" width="9" height="8" viewBox="0 0 9 8"><path d="M2 0.5 L7.5 3.5 L2 6.5 Z" fill="#3fae4f"/><circle cx="3" cy="4.5" r="2.2" fill="#d9534f"/></svg>
<svg style="left:209.5px;top:321.82px;" width="9" height="10" viewBox="0 0 9 10"><path d="M1.2 4.2 A2.2 2.2 0 0 1 5.2 3.2" fill="none" stroke="#7cae7c" stroke-width="1"/><rect x="2.8" y="4.2" width="5.4" height="5" rx="0.8" fill="#6cb46c"/><circle cx="5.5" cy="6.7" r="0.9" fill="#d8f0d8"/></svg>
<svg style="left:165px;top:339.04px;" width="8" height="6" viewBox="0 0 8 6"><path d="M0 0 H7.4 L3.7 5.8 Z" fill="#707070"/></svg>
<svg style="left:180px;top:337.04px;" width="12" height="10" viewBox="0 0 12 10"><path d="M0.7 1.2 H4.5 L5.5 2.4 H11.3 V9.3 H0.7 Z" fill="#fbf8f2" stroke="#bf9f78" stroke-width="1.3"/><path d="M0.7 3.2 H11.3" stroke="#bf9f78" stroke-width="0.9"/><circle cx="3.6" cy="6.2" r="1.1" fill="#6f95a8"/></svg>
<svg style="left:181px;top:354.26000000000005px;" width="8" height="6" viewBox="0 0 8 6"><path d="M0 0 H7.4 L3.7 5.8 Z" fill="#707070"/></svg>
<svg style="left:196px;top:352.26000000000005px;" width="12" height="10" viewBox="0 0 12 10"><path d="M0.7 1.2 H4.5 L5.5 2.4 H11.3 V9.3 H0.7 Z" fill="#fbf8f2" stroke="#bf9f78" stroke-width="1.3"/><path d="M0.7 3.2 H11.3" stroke="#bf9f78" stroke-width="0.9"/><circle cx="3.6" cy="6.2" r="1.1" fill="#6f95a8"/></svg>
<svg style="left:211.0px;top:365.98px;" width="13" height="13" viewBox="0 0 13 13"><circle cx="6.5" cy="6.5" r="5.2" fill="#bfe0f5" stroke="#8fb6d2" stroke-width="1"/><path d="M8.6 4.6 A2.7 2.7 0 1 0 8.6 8.4" fill="none" stroke="#33668f" stroke-width="1.3"/></svg>
<svg style="left:216.5px;top:365.48px;" width="9" height="8" viewBox="0 0 9 8"><path d="M2 0.5 L7.5 3.5 L2 6.5 Z" fill="#3fae4f"/><circle cx="3" cy="4.5" r="2.2" fill="#d9534f"/></svg>
<svg style="left:225.5px;top:367.48px;" width="9" height="10" viewBox="0 0 9 10"><path d="M1.2 4.2 A2.2 2.2 0 0 1 5.2 3.2" fill="none" stroke="#7cae7c" stroke-width="1"/><rect x="2.8" y="4.2" width="5.4" height="5" rx="0.8" fill="#6cb46c"/><circle cx="5.5" cy="6.7" r="0.9" fill="#d8f0d8"/></svg>
<svg style="left:211.0px;top:381.20000000000005px;" width="13" height="13" viewBox="0 0 13 13"><circle cx="6.5" cy="6.5" r="5.2" fill="#bfe0f5" stroke="#8fb6d2" stroke-width="1"/><path d="M8.6 4.6 A2.7 2.7 0 1 0 8.6 8.4" fill="none" stroke="#33668f" stroke-width="1.3"/></svg>
<svg style="left:225.5px;top:382.70000000000005px;" width="9" height="10" viewBox="0 0 9 10"><path d="M1.2 4.2 A2.2 2.2 0 0 1 5.2 3.2" fill="none" stroke="#7cae7c" stroke-width="1"/><rect x="2.8" y="4.2" width="5.4" height="5" rx="0.8" fill="#6cb46c"/><circle cx="5.5" cy="6.7" r="0.9" fill="#d8f0d8"/></svg>
<svg style="left:181px;top:399.92px;" width="8" height="6" viewBox="0 0 8 6"><path d="M0 0 H7.4 L3.7 5.8 Z" fill="#707070"/></svg>
<svg style="left:196px;top:397.92px;" width="12" height="10" viewBox="0 0 12 10"><path d="M0.7 1.2 H4.5 L5.5 2.4 H11.3 V9.3 H0.7 Z" fill="#fbf8f2" stroke="#bf9f78" stroke-width="1.3"/><path d="M0.7 3.2 H11.3" stroke="#bf9f78" stroke-width="0.9"/><circle cx="3.6" cy="6.2" r="1.1" fill="#6f95a8"/></svg>
<svg style="left:211.0px;top:411.64000000000004px;" width="13" height="13" viewBox="0 0 13 13"><circle cx="6.5" cy="6.5" r="5.2" fill="#bfe0f5" stroke="#8fb6d2" stroke-width="1"/><path d="M8.6 4.6 A2.7 2.7 0 1 0 8.6 8.4" fill="none" stroke="#33668f" stroke-width="1.3"/></svg>
<svg style="left:225.5px;top:413.14000000000004px;" width="9" height="10" viewBox="0 0 9 10"><path d="M1.2 4.2 A2.2 2.2 0 0 1 5.2 3.2" fill="none" stroke="#7cae7c" stroke-width="1"/><rect x="2.8" y="4.2" width="5.4" height="5" rx="0.8" fill="#6cb46c"/><circle cx="5.5" cy="6.7" r="0.9" fill="#d8f0d8"/></svg>
<svg style="left:165px;top:430.36px;" width="8" height="6" viewBox="0 0 8 6"><path d="M0 0 H7.4 L3.7 5.8 Z" fill="#707070"/></svg>
<svg style="left:180px;top:428.36px;" width="12" height="10" viewBox="0 0 12 10"><path d="M0.7 1.2 H4.5 L5.5 2.4 H11.3 V9.3 H0.7 Z" fill="#fbf8f2" stroke="#bf9f78" stroke-width="1.3"/><path d="M0.7 3.2 H11.3" stroke="#bf9f78" stroke-width="0.9"/><circle cx="3.6" cy="6.2" r="1.1" fill="#6f95a8"/></svg>
<svg style="left:195.0px;top:442.08000000000004px;" width="13" height="13" viewBox="0 0 13 13"><circle cx="6.5" cy="6.5" r="5.2" fill="#bfe0f5" stroke="#8fb6d2" stroke-width="1"/><path d="M8.6 4.6 A2.7 2.7 0 1 0 8.6 8.4" fill="none" stroke="#33668f" stroke-width="1.3"/></svg>
<svg style="left:200.5px;top:441.58000000000004px;" width="9" height="8" viewBox="0 0 9 8"><path d="M2 0.5 L7.5 3.5 L2 6.5 Z" fill="#3fae4f"/><circle cx="3" cy="4.5" r="2.2" fill="#d9534f"/></svg>
<svg style="left:209.5px;top:443.58000000000004px;" width="9" height="10" viewBox="0 0 9 10"><path d="M1.2 4.2 A2.2 2.2 0 0 1 5.2 3.2" fill="none" stroke="#7cae7c" stroke-width="1"/><rect x="2.8" y="4.2" width="5.4" height="5" rx="0.8" fill="#6cb46c"/><circle cx="5.5" cy="6.7" r="0.9" fill="#d8f0d8"/></svg>
<svg style="left:195.0px;top:457.3px;" width="13" height="13" viewBox="0 0 13 13"><circle cx="6.5" cy="6.5" r="5.2" fill="#bfe0f5" stroke="#8fb6d2" stroke-width="1"/><path d="M8.6 4.6 A2.7 2.7 0 1 0 8.6 8.4" fill="none" stroke="#33668f" stroke-width="1.3"/></svg>
<svg style="left:200.5px;top:456.8px;" width="9" height="8" viewBox="0 0 9 8"><path d="M2 0.5 L7.5 3.5 L2 6.5 Z" fill="#3fae4f"/><circle cx="3" cy="4.5" r="2.2" fill="#d9534f"/></svg>
<svg style="left:209.5px;top:458.8px;" width="9" height="10" viewBox="0 0 9 10"><path d="M1.2 4.2 A2.2 2.2 0 0 1 5.2 3.2" fill="none" stroke="#7cae7c" stroke-width="1"/><rect x="2.8" y="4.2" width="5.4" height="5" rx="0.8" fill="#6cb46c"/><circle cx="5.5" cy="6.7" r="0.9" fill="#d8f0d8"/></svg>
<svg style="left:81px;top:2px;" width="11" height="13" viewBox="0 0 11 13"><path d="M7.4 0.6 C7.5 1.7 6.7 2.9 5.6 2.9 C5.5 1.8 6.3 0.8 7.4 0.6 Z M9.6 9.6 C9.1 10.8 8.3 12.2 7.2 12.2 C6.3 12.2 6.1 11.7 5.1 11.7 C4.1 11.7 3.8 12.2 3 12.2 C1.8 12.2 0.4 9.7 0.4 7.4 C0.4 5 1.9 3.7 3.2 3.7 C4.1 3.7 4.7 4.2 5.3 4.2 C5.9 4.2 6.4 3.7 7.4 3.7 C8.2 3.7 9.1 4.1 9.7 5 C8.1 5.9 8.3 8.8 9.6 9.6 Z" fill="#2a2a2a"/></svg>
<svg style="left:819px;top:2px;" width="15" height="13" viewBox="0 0 15 13"><path d="M3 6.5 A4.6 4.6 0 1 1 4.4 9.8" fill="none" stroke="#2a2a2a" stroke-width="1.2"/><path d="M0.8 5.2 L3 7.6 L5.2 5.2" fill="none" stroke="#2a2a2a" stroke-width="1.1"/><path d="M7.6 3.6 V6.8 L9.6 8" fill="none" stroke="#2a2a2a" stroke-width="1.1"/></svg>
<svg style="left:846px;top:2px;" width="9" height="13" viewBox="0 0 9 13"><path d="M1 4 L7 9 L4.5 11 V2 L7 4 L1 9" fill="none" stroke="#333" stroke-width="1"/></svg>
<svg style="left:866px;top:3px;" width="17" height="12" viewBox="0 0 17 12"><path d="M1 4.2 A10 10 0 0 1 16 4.2" fill="none" stroke="#2a2a2a" stroke-width="1.5"/><path d="M3.5 6.8 A6.4 6.4 0 0 1 13.5 6.8" fill="none" stroke="#2a2a2a" stroke-width="1.5"/><path d="M6 9.2 A3 3 0 0 1 11 9.2" fill="none" stroke="#2a2a2a" stroke-width="1.5"/><circle cx="8.5" cy="11" r="1" fill="#2a2a2a"/></svg>
<svg style="left:890px;top:2px;" width="18" height="13" viewBox="0 0 18 13"><path d="M0.5 4.5 H3 L7 1.5 V11.5 L3 8.5 H0.5 Z" fill="#2a2a2a"/><path d="M9.5 4.5 A3 3 0 0 1 9.5 8.5 M11.5 2.8 A5.4 5.4 0 0 1 11.5 10.2 M13.5 1.2 A7.6 7.6 0 0 1 13.5 11.8" fill="none" stroke="#2a2a2a" stroke-width="1.1"/></svg>
<svg style="left:945px;top:3px;" width="19" height="11" viewBox="0 0 19 11"><rect x="0.7" y="0.7" width="15.6" height="9.6" fill="none" stroke="#2a2a2a" stroke-width="1.3"/><rect x="16.5" y="3.5" width="2" height="4" fill="#2a2a2a"/><rect x="2.5" y="2.5" width="12" height="6" fill="#555"/><path d="M9.5 1.5 L5.5 5.8 H8.5 L6.5 9.5 L11.5 4.8 H8.5 Z" fill="#f0e0e6"/></svg>
<svg style="left:1159px;top:3px;" width="12" height="12" viewBox="0 0 12 12"><circle cx="4.8" cy="4.8" r="3.8" fill="none" stroke="#2a2a2a" stroke-width="1.3"/><path d="M7.6 7.6 L11.2 11.2" stroke="#2a2a2a" stroke-width="1.5"/></svg>
<svg style="left:1183px;top:4px;" width="15" height="10" viewBox="0 0 15 10"><path d="M0 1.2 H1.8 M0 5 H1.8 M0 8.8 H1.8" stroke="#2a2a2a" stroke-width="1.4"/><path d="M4 1.2 H14.5 M4 5 H12.5 M4 8.8 H14.5" stroke="#2a2a2a" stroke-width="1.5"/></svg>
<svg style="left:70.2px;top:21px;" width="12" height="12" viewBox="0 0 12 12"><circle cx="6" cy="6" r="5.3" fill="#fc5f57" stroke="#df4744" stroke-width="0.6"/></svg>
<svg style="left:86.2px;top:21px;" width="12" height="12" viewBox="0 0 12 12"><circle cx="6" cy="6" r="5.3" fill="#fdbc2e" stroke="#de9f23" stroke-width="0.6"/></svg>
<svg style="left:102.2px;top:21px;" width="12" height="12" viewBox="0 0 12 12"><circle cx="6" cy="6" r="5.3" fill="#28c840" stroke="#1fa830" stroke-width="0.6"/></svg>
<svg style="left:209px;top:19px;" width="13" height="15" viewBox="0 0 13 15"><path d="M2.5 4.5 H9.5 L11.5 6.5 V14 H2.5 Z" fill="#fafafa" stroke="#8aa0b8" stroke-width="0.8"/><path d="M4 1 L7 4 L4 7 L1 4 Z" fill="#3d8fa0"/><rect x="4" y="9" width="6" height="3" fill="#7fb8d8"/></svg>
<svg style="left:196.5px;top:40px;" width="6" height="13" viewBox="0 0 6 13"><path d="M0.8 0.8 L4.8 6.5 L0.8 12.2" fill="none" stroke="#9a9a9a" stroke-width="0.9"/></svg>
<svg style="left:287.5px;top:40px;" width="6" height="13" viewBox="0 0 6 13"><path d="M0.8 0.8 L4.8 6.5 L0.8 12.2" fill="none" stroke="#9a9a9a" stroke-width="0.9"/></svg>
<svg style="left:328.5px;top:40px;" width="6" height="13" viewBox="0 0 6 13"><path d="M0.8 0.8 L4.8 6.5 L0.8 12.2" fill="none" stroke="#9a9a9a" stroke-width="0.9"/></svg>
<svg style="left:369.5px;top:40px;" width="6" height="13" viewBox="0 0 6 13"><path d="M0.8 0.8 L4.8 6.5 L0.8 12.2" fill="none" stroke="#9a9a9a" stroke-width="0.9"/></svg>
<svg style="left:411.5px;top:40px;" width="6" height="13" viewBox="0 0 6 13"><path d="M0.8 0.8 L4.8 6.5 L0.8 12.2" fill="none" stroke="#9a9a9a" stroke-width="0.9"/></svg>
<svg style="left:457.5px;top:40px;" width="6" height="13" viewBox="0 0 6 13"><path d="M0.8 0.8 L4.8 6.5 L0.8 12.2" fill="none" stroke="#9a9a9a" stroke-width="0.9"/></svg>
<svg style="left:556.5px;top:40px;" width="6" height="13" viewBox="0 0 6 13"><path d="M0.8 0.8 L4.8 6.5 L0.8 12.2" fill="none" stroke="#9a9a9a" stroke-width="0.9"/></svg>
<svg style="left:598.5px;top:40px;" width="6" height="13" viewBox="0 0 6 13"><path d="M0.8 0.8 L4.8 6.5 L0.8 12.2" fill="none" stroke="#9a9a9a" stroke-width="0.9"/></svg>
<svg style="left:650.5px;top:40px;" width="6" height="13" viewBox="0 0 6 13"><path d="M0.8 0.8 L4.8 6.5 L0.8 12.2" fill="none" stroke="#9a9a9a" stroke-width="0.9"/></svg>
<svg style="left:788.5px;top:40px;" width="6" height="13" viewBox="0 0 6 13"><path d="M0.8 0.8 L4.8 6.5 L0.8 12.2" fill="none" stroke="#9a9a9a" stroke-width="0.9"/></svg>
<svg style="left:205px;top:41.5px;" width="12" height="10" viewBox="0 0 12 10"><path d="M0.7 1.2 H4.5 L5.5 2.4 H11.3 V9.3 H0.7 Z" fill="#fbf8f2" stroke="#bf9f78" stroke-width="1.3"/><path d="M0.7 3.2 H11.3" stroke="#bf9f78" stroke-width="0.9"/><rect x="6.5" y="5.5" width="5.5" height="4.5" rx="1" fill="#5aa0d8"/></svg>
<svg style="left:298px;top:41.5px;" width="12" height="10" viewBox="0 0 12 10"><path d="M0.7 1.2 H4.5 L5.5 2.4 H11.3 V9.3 H0.7 Z" fill="#fbf8f2" stroke="#bf9f78" stroke-width="1.3"/><path d="M0.7 3.2 H11.3" stroke="#bf9f78" stroke-width="0.9"/></svg>
<svg style="left:338px;top:41.5px;" width="12" height="10" viewBox="0 0 12 10"><path d="M0.7 1.2 H4.5 L5.5 2.4 H11.3 V9.3 H0.7 Z" fill="#fbf8f2" stroke="#bf9f78" stroke-width="1.3"/><path d="M0.7 3.2 H11.3" stroke="#bf9f78" stroke-width="0.9"/></svg>
<svg style="left:378px;top:41.5px;" width="12" height="10" viewBox="0 0 12 10"><path d="M0.7 1.2 H4.5 L5.5 2.4 H11.3 V9.3 H0.7 Z" fill="#f4fbf2" stroke="#7fb87f" stroke-width="1.3"/><path d="M0.7 3.2 H11.3" stroke="#7fb87f" stroke-width="0.9"/></svg>
<svg style="left:421px;top:41.5px;" width="12" height="10" viewBox="0 0 12 10"><path d="M0.7 1.2 H4.5 L5.5 2.4 H11.3 V9.3 H0.7 Z" fill="#fbf8f2" stroke="#bf9f78" stroke-width="1.3"/><path d="M0.7 3.2 H11.3" stroke="#bf9f78" stroke-width="0.9"/><circle cx="3.6" cy="6.2" r="1.1" fill="#6f95a8"/></svg>
<svg style="left:467px;top:41.5px;" width="12" height="10" viewBox="0 0 12 10"><path d="M0.7 1.2 H4.5 L5.5 2.4 H11.3 V9.3 H0.7 Z" fill="#fbf8f2" stroke="#bf9f78" stroke-width="1.3"/><path d="M0.7 3.2 H11.3" stroke="#bf9f78" stroke-width="0.9"/><circle cx="3.6" cy="6.2" r="1.1" fill="#6f95a8"/></svg>
<svg style="left:566px;top:41.5px;" width="12" height="10" viewBox="0 0 12 10"><path d="M0.7 1.2 H4.5 L5.5 2.4 H11.3 V9.3 H0.7 Z" fill="#fbf8f2" stroke="#bf9f78" stroke-width="1.3"/><path d="M0.7 3.2 H11.3" stroke="#bf9f78" stroke-width="0.9"/><circle cx="3.6" cy="6.2" r="1.1" fill="#6f95a8"/></svg>
<svg style="left:608px;top:41.5px;" width="12" height="10" viewBox="0 0 12 10"><path d="M0.7 1.2 H4.5 L5.5 2.4 H11.3 V9.3 H0.7 Z" fill="#fbf8f2" stroke="#bf9f78" stroke-width="1.3"/><path d="M0.7 3.2 H11.3" stroke="#bf9f78" stroke-width="0.9"/><circle cx="3.6" cy="6.2" r="1.1" fill="#6f95a8"/></svg>
<svg style="left:659.0px;top:40.0px;" width="13" height="13" viewBox="0 0 13 13"><circle cx="6.5" cy="6.5" r="5.2" fill="#bfe0f5" stroke="#8fb6d2" stroke-width="1"/><path d="M8.6 4.6 A2.7 2.7 0 1 0 8.6 8.4" fill="none" stroke="#33668f" stroke-width="1.3"/></svg>
<svg style="left:803px;top:40px;" width="14" height="13" viewBox="0 0 14 13"><path d="M3 0.5 V8" stroke="#3fae4f" stroke-width="2.4"/><path d="M0 6.5 H6 L3 11 Z" fill="#3fae4f"/><path d="M8 1 H12 M8 5.5 H12 M8 10 H12" stroke="#a0a0a0" stroke-width="1.6" stroke-dasharray="1.2 1"/></svg>
<div style="left:822px;top:39.2px;width:200px;height:15.5px;background:linear-gradient(#f4f4f4,#e6e6e6);border:1px solid #bdbdbd;border-radius:3px;box-sizing:border-box;"></div>
<div style="left:826px;top:41px;width:11px;height:12px;background:#d4d4d4;border-radius:1px;"></div>
<svg style="left:1012px;top:44px;" width="7" height="5" viewBox="0 0 7 5"><path d="M0 0 H6.5 L3.25 4 Z" fill="#9a9a9a"/></svg>
<svg style="left:1027px;top:41px;" width="11" height="12" viewBox="0 0 11 12"><path d="M1 0.5 L10 6 L1 11.5 Z" fill="#3cb24a"/></svg>
<svg style="left:1045px;top:40px;" width="13" height="13" viewBox="0 0 13 13"><circle cx="6" cy="6.5" r="4.3" fill="#3cb24a"/><path d="M10 3 L12.5 1.5 M10 10 L12.5 11.5 M10.5 6.5 H13 M2 3 L0 1.5 M2 10 L0 11.5 M6 0.5 V2" stroke="#3a4a3a" stroke-width="1"/><path d="M8.5 3 A4 4 0 0 1 8.5 10" fill="none" stroke="#3a4a3a" stroke-width="1.3"/></svg>
<svg style="left:1065px;top:41px;" width="13" height="12" viewBox="0 0 13 12"><circle cx="8.5" cy="6" r="4.8" fill="#8a8a8a"/><g fill="#e0e0e0"><circle cx="7" cy="3.5" r="0.8"/><circle cx="10" cy="3.5" r="0.8"/><circle cx="8.5" cy="6" r="0.8"/><circle cx="11.5" cy="6" r="0.8"/><circle cx="7" cy="8.5" r="0.8"/><circle cx="10" cy="8.5" r="0.8"/></g><path d="M0.5 2 L7 6 L0.5 10 Z" fill="#3cb24a"/></svg>
<div style="left:1085px;top:40px;width:1px;height:14px;background:repeating-linear-gradient(#aaa 0 1px, transparent 1px 2px);"></div>
<div style="left:1170px;top:40px;width:1px;height:14px;background:repeating-linear-gradient(#aaa 0 1px, transparent 1px 2px);"></div>
<svg style="left:1090px;top:40px;" width="13" height="14" viewBox="0 0 13 14"><text x="0" y="5.5" font-family="Liberation Sans" font-size="6" font-weight="bold" fill="#666">VCS</text><path d="M2 7.5 H10 L6 12.5 Z M4.5 5.5 H7.5 V8 H4.5 Z" fill="#4a9fd0"/></svg>
<svg style="left:1110px;top:40px;" width="13" height="14" viewBox="0 0 13 14"><text x="0" y="5.5" font-family="Liberation Sans" font-size="6" font-weight="bold" fill="#666">VCS</text><path d="M2 10 H10 L6 5 Z M4.5 9.5 H7.5 V13 H4.5 Z" fill="#3cb24a"/></svg>
<svg style="left:1131px;top:40px;" width="13" height="13" viewBox="0 0 13 13"><rect x="0.6" y="3.6" width="7.5" height="8.5" fill="none" stroke="#777" stroke-width="1.2"/><rect x="3.5" y="5.5" width="4" height="4" fill="#777"/><circle cx="9" cy="4" r="3.4" fill="#8cc0e8" stroke="#4a8fc8" stroke-width="0.8"/><path d="M9 2 V4 H10.5" stroke="#fff" stroke-width="0.8" fill="none"/></svg>
<svg style="left:1151px;top:41px;" width="13" height="12" viewBox="0 0 13 12"><path d="M3.5 4 H8 A3.5 3.5 0 0 1 8 11 H4" fill="none" stroke="#8a8a8a" stroke-width="1.6"/><path d="M0.5 4 L4 0.8 V7.2 Z" fill="#8a8a8a"/></svg>
<svg style="left:1175px;top:40px;" width="13" height="13" viewBox="0 0 13 13"><rect x="2.5" y="0.6" width="8" height="3" fill="none" stroke="#777" stroke-width="1"/><rect x="0.6" y="3" width="8" height="9.4" fill="none" stroke="#777" stroke-width="1.2"/><g fill="#4a9fd0"><rect x="3" y="6" width="2" height="2"/><rect x="6" y="6" width="2" height="2"/><rect x="9.5" y="5" width="2" height="2"/><rect x="9.5" y="8" width="2" height="2"/><rect x="3" y="9" width="2" height="2"/><rect x="6" y="9" width="2" height="2"/></g></svg>
<svg style="left:1200px;top:41px;" width="13" height="13" viewBox="0 0 13 13"><circle cx="5" cy="5" r="4" fill="none" stroke="#8a8a8a" stroke-width="1.3"/><path d="M8 8 L12 12" stroke="#8a8a8a" stroke-width="1.6"/></svg>
<svg style="left:89px;top:60px;" width="13" height="12" viewBox="0 0 13 12"><rect x="0.6" y="3" width="6" height="8" fill="#d9d9d9" stroke="#8f8f8f" stroke-width="1"/><rect x="4.6" y="1" width="7.5" height="6.5" fill="#bcd8ea" stroke="#7f9fb8" stroke-width="1"/></svg>
<svg style="left:169px;top:64px;" width="7" height="5" viewBox="0 0 7 5"><path d="M0 0 H6.5 L3.25 4 Z" fill="#7a7a7a"/></svg>
<svg style="left:302px;top:60px;" width="12" height="12" viewBox="0 0 12 12"><circle cx="6" cy="6" r="4.6" fill="none" stroke="#777" stroke-width="1.1"/><circle cx="6" cy="6" r="1.5" fill="#777"/><path d="M6 0 V3 M6 9 V12 M0 6 H3 M9 6 H12" stroke="#777" stroke-width="1"/></svg>
<svg style="left:318px;top:60px;" width="10" height="12" viewBox="0 0 10 12"><path d="M0 6 H10" stroke="#777" stroke-width="1"/><path d="M2.5 1 H7.5 L5 4 Z M2.5 11 H7.5 L5 8 Z" fill="#777"/></svg>
<div style="left:333px;top:60px;width:1px;height:12px;background:repeating-linear-gradient(#aaa 0 1px, transparent 1px 2px);"></div>
<svg style="left:340px;top:60px;" width="16" height="12" viewBox="0 0 16 12"><circle cx="6" cy="6" r="3.2" fill="none" stroke="#6e6e6e" stroke-width="2.4" stroke-dasharray="1.6 0.9"/><circle cx="6" cy="6" r="2.5" fill="#6e6e6e"/><circle cx="6" cy="6" r="1.1" fill="#e0e0e0"/><path d="M12 5.5 H15.5 L13.75 7.5 Z" fill="#6e6e6e"/></svg>
<svg style="left:362px;top:60px;" width="12" height="12" viewBox="0 0 12 12"><path d="M1 1 V11" stroke="#6e6e6e" stroke-width="1.3"/><path d="M4 1.5 V10.5" stroke="#6e6e6e" stroke-width="1"/><path d="M6 6 H11.5 M6 6 L8.5 3.5 M6 6 L8.5 8.5" stroke="#6e6e6e" stroke-width="1.1" fill="none"/></svg>
<div style="left:378px;top:57.5px;width:172px;height:21px;background:linear-gradient(#edf6e3,#e4f0d8);"></div>
<div style="left:550px;top:57.5px;width:142px;height:18.5px;background:linear-gradient(#dcdcdc,#d2d2d2);border-left:1px solid #b8b8b8;box-sizing:border-box;"></div>
<div style="left:692px;top:57.5px;width:159px;height:18.5px;background:linear-gradient(#dcdcdc,#d2d2d2);border-left:1px solid #b8b8b8;box-sizing:border-box;"></div>
<div style="left:851px;top:57.5px;width:125px;height:18.5px;background:linear-gradient(#dcdcdc,#d2d2d2);border-left:1px solid #b8b8b8;box-sizing:border-box;"></div>
<div style="left:976px;top:57.5px;width:142px;height:18.5px;background:linear-gradient(#dcdcdc,#d2d2d2);border-left:1px solid #b8b8b8;box-sizing:border-box;"></div>
<div style="left:1118px;top:57.5px;width:1px;height:18.5px;background:#b8b8b8;"></div>
<div style="left:550px;top:75.5px;width:648px;height:1px;background:#b9c4b0;"></div>
<svg style="left:386.9px;top:59.8px;" width="13" height="13" viewBox="0 0 13 13"><circle cx="6.5" cy="6.5" r="5.2" fill="#bfe0f5" stroke="#8fb6d2" stroke-width="1"/><path d="M8.6 4.6 A2.7 2.7 0 1 0 8.6 8.4" fill="none" stroke="#33668f" stroke-width="1.3"/></svg>
<svg style="left:559.0px;top:59.8px;" width="13" height="13" viewBox="0 0 13 13"><circle cx="6.5" cy="6.5" r="5.2" fill="#a6e6a6" stroke="#80c680" stroke-width="1"/><path d="M6.5 3.8 V9.2 M5.2 3.9 H7.8 M5.2 9.1 H7.8" stroke="#2d5b2d" stroke-width="1.2"/></svg>
<svg style="left:700.0px;top:59.8px;" width="13" height="13" viewBox="0 0 13 13"><circle cx="6.5" cy="6.5" r="5.2" fill="#bfe0f5" stroke="#8fb6d2" stroke-width="1"/><path d="M8.6 4.6 A2.7 2.7 0 1 0 8.6 8.4" fill="none" stroke="#33668f" stroke-width="1.3"/></svg>
<svg style="left:859.0px;top:59.8px;" width="13" height="13" viewBox="0 0 13 13"><circle cx="6.5" cy="6.5" r="5.2" fill="#a6e6a6" stroke="#80c680" stroke-width="1"/><path d="M6.5 3.8 V9.2 M5.2 3.9 H7.8 M5.2 9.1 H7.8" stroke="#2d5b2d" stroke-width="1.2"/></svg>
<svg style="left:984.0px;top:59.8px;" width="13" height="13" viewBox="0 0 13 13"><circle cx="6.5" cy="6.5" r="5.2" fill="#bfe0f5" stroke="#8fb6d2" stroke-width="1"/><path d="M8.6 4.6 A2.7 2.7 0 1 0 8.6 8.4" fill="none" stroke="#33668f" stroke-width="1.3"/></svg>
<svg style="left:537.5px;top:62.8px;" width="7" height="7" viewBox="0 0 7 7"><path d="M0.8 0.8 L6.2 6.2 M6.2 0.8 L0.8 6.2" stroke="#6a6a6a" stroke-width="1.2"/></svg>
<svg style="left:677.0px;top:62.8px;" width="7" height="7" viewBox="0 0 7 7"><path d="M0.8 0.8 L6.2 6.2 M6.2 0.8 L0.8 6.2" stroke="#6a6a6a" stroke-width="1.2"/></svg>
<svg style="left:837.5px;top:62.8px;" width="7" height="7" viewBox="0 0 7 7"><path d="M0.8 0.8 L6.2 6.2 M6.2 0.8 L0.8 6.2" stroke="#6a6a6a" stroke-width="1.2"/></svg>
<svg style="left:961.5px;top:62.8px;" width="7" height="7" viewBox="0 0 7 7"><path d="M0.8 0.8 L6.2 6.2 M6.2 0.8 L0.8 6.2" stroke="#6a6a6a" stroke-width="1.2"/></svg>
<svg style="left:1105.5px;top:62.8px;" width="7" height="7" viewBox="0 0 7 7"><path d="M0.8 0.8 L6.2 6.2 M6.2 0.8 L0.8 6.2" stroke="#6a6a6a" stroke-width="1.2"/></svg>
<svg style="left:1177px;top:62px;" width="18" height="9" viewBox="0 0 18 9"><path d="M0 3 H4 L2 5.5 Z" fill="#777"/><path d="M5 1 H12 M5 3.5 H12 M5 6 H12 M5 8.5 H12" stroke="#777" stroke-width="1"/><text x="13" y="8" font-family="Liberation Sans" font-size="7" fill="#333">4</text></svg>
<svg style="left:413.5px;top:104.4px;" width="8" height="9" viewBox="0 0 8 9"><path d="M0.5 0.5 H7.5 V5.5 L4 8.5 L0.5 5.5 Z" fill="#fafafa" stroke="#d4d4d4" stroke-width="0.9"/><path d="M2 3 H6" stroke="#c0c0c0" stroke-width="0.9"/></svg>
<svg style="left:413.5px;top:224.4px;" width="8" height="9" viewBox="0 0 8 9"><path d="M0.5 0.5 H7.5 V5.5 L4 8.5 L0.5 5.5 Z" fill="#fafafa" stroke="#d4d4d4" stroke-width="0.9"/><path d="M2 3 H6" stroke="#c0c0c0" stroke-width="0.9"/></svg>
<svg style="left:413.5px;top:284.4px;" width="8" height="9" viewBox="0 0 8 9"><path d="M0.5 0.5 H7.5 V5.5 L4 8.5 L0.5 5.5 Z" fill="#fafafa" stroke="#d4d4d4" stroke-width="0.9"/><path d="M2 3 H6" stroke="#c0c0c0" stroke-width="0.9"/></svg>
<svg style="left:413.5px;top:165.4px;" width="8" height="9" viewBox="0 0 8 9"><path d="M0.5 8.5 H7.5 V3.5 L4 0.5 L0.5 3.5 Z" fill="#fafafa" stroke="#d4d4d4" stroke-width="0.9"/><path d="M2 5.5 H6" stroke="#c0c0c0" stroke-width="0.9"/></svg>
<svg style="left:413.5px;top:249.4px;" width="8" height="9" viewBox="0 0 8 9"><path d="M0.5 8.5 H7.5 V3.5 L4 0.5 L0.5 3.5 Z" fill="#fafafa" stroke="#d4d4d4" stroke-width="0.9"/><path d="M2 5.5 H6" stroke="#c0c0c0" stroke-width="0.9"/></svg>
<svg style="left:413.5px;top:309.4px;" width="8" height="9" viewBox="0 0 8 9"><path d="M0.5 8.5 H7.5 V3.5 L4 0.5 L0.5 3.5 Z" fill="#fafafa" stroke="#d4d4d4" stroke-width="0.9"/><path d="M2 5.5 H6" stroke="#c0c0c0" stroke-width="0.9"/></svg>
<svg style="left:1186px;top:79px;" width="12" height="10" viewBox="0 0 12 10"><path d="M1 4.5 L4.2 7.8 L10.5 1" fill="none" stroke="#4caa4c" stroke-width="2"/></svg>
<svg style="left:618px;top:316px;" width="8" height="14" viewBox="0 0 8 14"><path d="M1 0.8 H3 Q4 0.8 4 2 V12 Q4 13.2 3 13.2 H1 M7 0.8 H5 Q4 0.8 4 2 V12 Q4 13.2 5 13.2 H7" fill="none" stroke="#222" stroke-width="1.1"/></svg>
<div class="t" style="left:1202px;top:63px;font-family:'Liberation Sans';font-size:15px;font-style:italic;font-weight:700;color:#4a7fc0;line-height:14px;">m</div>
<svg style="left:1201px;top:160px;" width="12" height="12" viewBox="0 0 12 12"><rect x="0.6" y="0.6" width="8" height="8" fill="#e8e8e8" stroke="#7a8fa8" stroke-width="1"/><rect x="3.6" y="3.6" width="8" height="8" fill="#a8c8e8" stroke="#6a88a8" stroke-width="1"/></svg>
<svg style="left:1201px;top:231px;" width="13" height="13" viewBox="0 0 13 13"><ellipse cx="5.5" cy="6" rx="4.5" ry="3.5" transform="rotate(-40 5.5 6)" fill="#c27a3a" stroke="#7a4a1a" stroke-width="0.8"/><path d="M5 9 L8 12 L12.5 5.5" fill="none" stroke="#3cb24a" stroke-width="2"/></svg>
<svg style="left:1201px;top:328px;" width="13" height="13" viewBox="0 0 13 13"><ellipse cx="6.5" cy="7" rx="2.5" ry="3.5" fill="#9a80b8"/><path d="M1 3 L4 5 M12 3 L9 5 M0.5 7 H4 M12.5 7 H9 M1 11 L4 9 M12 11 L9 9" stroke="#9a80b8" stroke-width="1"/></svg>
<div style="left:106px;top:480px;width:10px;height:11px;background:linear-gradient(#d8d8d8,#c4c4c4);border:1px solid #b0b0b0;box-sizing:border-box;"></div>
<svg style="left:1159px;top:479px;" width="16" height="12" viewBox="0 0 16 12"><circle cx="6" cy="6" r="3.2" fill="none" stroke="#777" stroke-width="2.4" stroke-dasharray="1.6 0.9"/><circle cx="6" cy="6" r="2.5" fill="#777"/><circle cx="6" cy="6" r="1.1" fill="#ddd"/><path d="M12 5.5 H15.5 L13.75 7.5 Z" fill="#777"/></svg>
<svg style="left:1182px;top:479px;" width="11" height="12" viewBox="0 0 11 12"><path d="M5.5 0.5 V7" stroke="#777" stroke-width="1.2"/><path d="M3 5 L5.5 8 L8 5" fill="none" stroke="#777" stroke-width="1.2"/><path d="M0.5 10.5 H10.5" stroke="#777" stroke-width="1.5"/></svg>
<svg style="left:88.5px;top:500.5px;" width="10" height="12" viewBox="0 0 10 12"><path d="M0.5 0.5 L9.5 6 L0.5 11.5 Z" fill="#35aa45"/></svg>
<svg style="left:85px;top:519px;" width="14" height="14" viewBox="0 0 14 14"><path d="M0.5 5 L7.5 9.3 L0.5 13.5 Z" fill="#35aa45"/><circle cx="9" cy="5.5" r="4.6" fill="#d85555"/><path d="M9 2.8 V6.2 M9 7.5 V8.5" stroke="#fff" stroke-width="1.2"/></svg>
<div style="left:86px;top:539px;width:18px;height:1px;background:repeating-linear-gradient(90deg,#aaa 0 1px,transparent 1px 2px);"></div>
<div style="left:86px;top:604px;width:18px;height:1px;background:repeating-linear-gradient(90deg,#aaa 0 1px,transparent 1px 2px);"></div>
<div style="left:86px;top:628px;width:18px;height:1px;background:repeating-linear-gradient(90deg,#aaa 0 1px,transparent 1px 2px);"></div>
<div style="left:88.5px;top:546.5px;width:9px;height:9.5px;background:#9a9a9a;"></div>
<svg style="left:87px;top:565px;" width="12" height="11" viewBox="0 0 12 11"><rect x="0.6" y="2.6" width="10.8" height="7.8" fill="#a8a8a8" stroke="#8a8a8a" stroke-width="1"/><rect x="3" y="1" width="5" height="2" fill="#8a8a8a"/><circle cx="6" cy="6.5" r="2.3" fill="#e8e8e8" stroke="#8a8a8a" stroke-width="0.8"/></svg>
<svg style="left:87px;top:585px;" width="12" height="12" viewBox="0 0 12 12"><path d="M5 1 H11 V11 H5" fill="none" stroke="#9a9a9a" stroke-width="1.5"/><path d="M0 6 H7 M4.5 3.2 L7.5 6 L4.5 8.8" fill="none" stroke="#9a9a9a" stroke-width="1.6"/></svg>
<svg style="left:87px;top:610px;" width="12" height="12" viewBox="0 0 12 12"><rect x="0.5" y="0.5" width="11" height="5" fill="#8fbde0" stroke="#888" stroke-width="1"/><rect x="0.5" y="7" width="11" height="4.5" fill="#bbb" stroke="#888" stroke-width="1"/><rect x="2" y="2" width="4" height="2" fill="#fff"/></svg>
<svg style="left:87px;top:633px;" width="12" height="13" viewBox="0 0 12 13"><path d="M5 1.5 L11 6.5 L8.5 8 L6.5 11 L1.5 5 L4.5 4.5 Z" fill="#9b7fc0"/><path d="M3 8.5 L0.5 12" stroke="#8a70a8" stroke-width="1.4"/></svg>
<svg style="left:88px;top:655px;" width="11" height="11" viewBox="0 0 11 11"><path d="M1 1 L10 10 M10 1 L1 10" stroke="#d9534f" stroke-width="2"/></svg>
<svg style="left:89px;top:671px;" width="9" height="7" viewBox="0 0 9 7"><path d="M0.5 0.5 L3 3.5 L0.5 6.5 M5 0.5 L7.5 3.5 L5 6.5" fill="none" stroke="#888" stroke-width="0.9"/></svg>
<div style="left:107px;top:496.7px;width:19px;height:18.8px;background:#cdcdcd;border:1px solid #8a8a8a;box-sizing:border-box;"></div>
<svg style="left:110px;top:499px;" width="13" height="13" viewBox="0 0 13 13"><path d="M1.5 1.5 L6.5 7 L11.5 1.5 M6.5 7 V11" fill="none" stroke="#8a8a8a" stroke-width="1.3"/><circle cx="2" cy="2" r="1.6" fill="#e06666"/><circle cx="11" cy="2" r="1.6" fill="#4caf50"/><circle cx="6.5" cy="3" r="1.4" fill="#e0a050"/><circle cx="3.5" cy="11" r="1.5" fill="#e06666"/><circle cx="9.5" cy="11" r="1.5" fill="#e0a050"/></svg>
<div style="left:130px;top:498px;width:1px;height:17px;background:repeating-linear-gradient(#aaa 0 1px, transparent 1px 2px);"></div>
<div style="left:155px;top:498px;width:1px;height:17px;background:repeating-linear-gradient(#aaa 0 1px, transparent 1px 2px);"></div>
<div style="left:199px;top:498px;width:1px;height:17px;background:repeating-linear-gradient(#aaa 0 1px, transparent 1px 2px);"></div>
<svg style="left:135px;top:499px;" width="13" height="13" viewBox="0 0 13 13"><path d="M3 0.5 V11 M0.5 8.5 L3 11.5 L5.5 8.5" fill="none" stroke="#777" stroke-width="1.1"/><text x="6" y="6" font-family="Liberation Sans" font-size="7.5" fill="#5a8fb8">a</text><text x="6" y="12.8" font-family="Liberation Sans" font-size="7.5" fill="#7a7a9a">z</text></svg>
<svg style="left:160px;top:499px;" width="11" height="13" viewBox="0 0 11 13"><path d="M0.5 0.8 H10.5 M0.5 11.8 H10.5" stroke="#8a8a8a" stroke-width="1.1"/><path d="M2.5 5.5 H8.5 L5.5 2.5 Z M2.5 7 H8.5 L5.5 10 Z" fill="#8a8a8a"/></svg>
<svg style="left:181px;top:499px;" width="11" height="13" viewBox="0 0 11 13"><path d="M0.5 6.3 H10.5" stroke="#8a8a8a" stroke-width="1.1"/><path d="M2.5 1 H8.5 L5.5 4.5 Z M2.5 11.5 H8.5 L5.5 8 Z" fill="#8a8a8a"/></svg>
<svg style="left:206px;top:500px;" width="10" height="12" viewBox="0 0 10 12"><path d="M5 11.5 V3" stroke="#9a9a9a" stroke-width="2.4"/><path d="M0.5 5.5 L5 0.5 L9.5 5.5 Z" fill="#9a9a9a"/></svg>
<svg style="left:226px;top:500px;" width="10" height="12" viewBox="0 0 10 12"><path d="M5 0.5 V9" stroke="#9a9a9a" stroke-width="2.4"/><path d="M0.5 6.5 L5 11.5 L9.5 6.5 Z" fill="#9a9a9a"/></svg>
<svg style="left:246px;top:499px;" width="12" height="13" viewBox="0 0 12 13"><path d="M6 2 H0.8 V12.2 H9 V8" fill="none" stroke="#8a8a8a" stroke-width="1.4"/><path d="M8.5 11 V3" stroke="#3cb24a" stroke-width="1.8"/><path d="M5.5 4.5 L8.5 0.5 L11.5 4.5 Z" fill="#3cb24a"/></svg>
<svg style="left:306px;top:500px;" width="14" height="14" viewBox="0 0 14 14"><circle cx="6" cy="6" r="3.6" fill="none" stroke="#3e8fc0" stroke-width="2.8" stroke-dasharray="1.8 1"/><circle cx="6" cy="6" r="2.8" fill="#3e8fc0"/><circle cx="6" cy="6" r="1.2" fill="#e8e8e8"/><path d="M10 11 H13.5 L11.75 13 Z" fill="#555"/></svg>
<div style="left:761.5px;top:500px;width:433px;height:13px;background:#d9563f;border:1.2px solid #606060;border-radius:3px;box-sizing:border-box;background:linear-gradient(rgba(255,255,255,0.22),rgba(255,255,255,0) 45%,rgba(255,255,255,0) 60%,rgba(255,255,255,0.2)),repeating-linear-gradient(90deg,#f2a595 0 1px,#d9523d 1px 4.6px,#f0a090 4.6px 5.6px);"></div>
<svg style="left:125.5px;top:519.5px;" width="12" height="12" viewBox="0 0 12 12"><circle cx="6" cy="6" r="5.4" fill="#f0a030" stroke="#d08018" stroke-width="0.8"/><path d="M6 2.5 V6.8 M6 8.2 V9.4" stroke="#fff" stroke-width="1.4"/></svg>
<svg style="left:334.5px;top:522px;" width="11" height="12" viewBox="0 0 11 12"><path d="M5.5 11.5 V4" stroke="#4a9fd0" stroke-width="2.6"/><path d="M0.5 6 L5.5 0.5 L10.5 6 Z" fill="#4a9fd0"/></svg>
<svg style="left:334.5px;top:542px;" width="11" height="12" viewBox="0 0 11 12"><path d="M5.5 0.5 V8" stroke="#4a9fd0" stroke-width="2.6"/><path d="M0.5 6 L5.5 11.5 L10.5 6 Z" fill="#4a9fd0"/></svg>
<svg style="left:333.5px;top:563px;" width="13" height="12" viewBox="0 0 13 12"><path d="M1 2.5 H12 M1 9.5 H12" stroke="#8a8a8a" stroke-width="1.2"/><path d="M2 6 H11" stroke="#4a9fd0" stroke-width="1.2"/><path d="M9 4.5 L11 6 L9 7.5 M4 4.5 L2 6 L4 7.5" fill="none" stroke="#4a9fd0" stroke-width="1"/></svg>
<svg style="left:333.5px;top:583px;" width="13" height="13" viewBox="0 0 13 13"><rect x="0.6" y="2.6" width="10.8" height="9.8" fill="#ddd" stroke="#999" stroke-width="1.1"/><path d="M8 0 V7 M5.5 4.5 L8 7.5 L10.5 4.5" fill="none" stroke="#9b6fc0" stroke-width="1.6"/></svg>
<svg style="left:333.5px;top:603px;" width="13" height="13" viewBox="0 0 13 13"><rect x="2.5" y="0.6" width="8" height="3.5" fill="#ddd" stroke="#4a8fb8" stroke-width="1"/><rect x="0.6" y="4" width="11.8" height="5" fill="#4a9fd0"/><rect x="2.5" y="7.5" width="8" height="5" fill="#fff" stroke="#888" stroke-width="1"/></svg>
<svg style="left:334.5px;top:623px;" width="11" height="13" viewBox="0 0 11 13"><path d="M0.5 2.5 H10.5 M3.5 2.5 V0.8 H7.5 V2.5" fill="none" stroke="#aaa" stroke-width="1.1"/><path d="M1.5 4 H9.5 L8.8 12.2 H2.2 Z" fill="#b0b0b0"/></svg>
<svg style="left:352.5px;top:593.5px;" width="8" height="8" viewBox="0 0 8 8"><rect x="0.5" y="0.5" width="7" height="7" fill="#fff" stroke="#ccc" stroke-width="0.8"/><path d="M2 4 H6 M4 2 V6" stroke="#aaa" stroke-width="0.8"/></svg>
<svg style="left:352.5px;top:605.5px;" width="8" height="8" viewBox="0 0 8 8"><rect x="0.5" y="0.5" width="7" height="7" fill="#fff" stroke="#ccc" stroke-width="0.8"/><path d="M2 4 H6 M4 2 V6" stroke="#aaa" stroke-width="0.8"/></svg>
<svg style="left:90px;top:684px;" width="13" height="14" viewBox="0 0 13 14"><rect x="0.5" y="0.5" width="8" height="8" fill="#5a8fc8"/><circle cx="7" cy="8" r="4.5" fill="#4fb84f"/><circle cx="9" cy="10" r="3.5" fill="#e0a050" opacity="0.9"/></svg>
<svg style="left:201px;top:685px;" width="13" height="13" viewBox="0 0 13 13"><path d="M6.5 0.8 L12.2 6.5 L6.5 12.2 L0.8 6.5 Z" fill="none" stroke="#3a8ac0" stroke-width="1.4"/><circle cx="6.5" cy="6.5" r="2.5" fill="none" stroke="#3a8ac0" stroke-width="1.2"/><path d="M6.5 3 V10 M3 6.5 H10" stroke="#3a8ac0" stroke-width="0.9"/></svg>
<svg style="left:275px;top:685px;" width="11" height="12" viewBox="0 0 11 12"><rect x="0.5" y="0.5" width="10" height="11" fill="#e8c890" stroke="#c8a060" stroke-width="1"/><rect x="2.5" y="3" width="6" height="5" fill="#d8b070"/></svg>
<svg style="left:359.5px;top:685px;" width="10" height="12" viewBox="0 0 10 12"><path d="M0.5 0.5 L9.5 6 L0.5 11.5 Z" fill="#35aa45"/></svg>
<svg style="left:414px;top:684px;" width="14" height="14" viewBox="0 0 14 14"><circle cx="4" cy="4" r="3.3" fill="#eee" stroke="#888" stroke-width="0.8"/><circle cx="8" cy="8" r="4" fill="#e0b070"/><rect x="3" y="9" width="10" height="4.5" fill="#5a9a9a"/><circle cx="4" cy="4" r="1.2" fill="#555"/></svg>
<svg style="left:1133px;top:686px;" width="12" height="11" viewBox="0 0 12 11"><path d="M0.5 0.5 H11.5 V7.5 H5 L2 10.5 V7.5 H0.5 Z" fill="#a8a8a8"/></svg>
<div style="left:69px;top:703.5px;width:10.5px;height:10.5px;background:linear-gradient(#c8c8c8,#b8b8b8);border:1px solid #8a8a8a;box-sizing:border-box;"></div>
<div style="left:957px;top:701px;width:1px;height:15.5px;background:#b8b8b8;"></div>
<div style="left:976px;top:701px;width:1px;height:15.5px;background:#b8b8b8;"></div>
<div style="left:1005px;top:701px;width:1px;height:15.5px;background:#b8b8b8;"></div>
<div style="left:1026.4px;top:701px;width:1px;height:15.5px;background:#b8b8b8;"></div>
<div style="left:1065px;top:701px;width:1px;height:15.5px;background:#b8b8b8;"></div>
<div style="left:1177px;top:701px;width:1px;height:15.5px;background:#b8b8b8;"></div>
<svg style="left:960.5px;top:702.5px;" width="13" height="13" viewBox="0 0 13 13"><circle cx="6.5" cy="6.5" r="5.6" fill="#d8d8d8" stroke="#999" stroke-width="1"/><path d="M6.5 1 A5.5 5.5 0 0 1 12 6.5" fill="none" stroke="#4caf50" stroke-width="2"/><path d="M1 6.5 A5.5 5.5 0 0 1 4 1.8" fill="none" stroke="#e06666" stroke-width="2"/><path d="M6.5 6.5 L10 3" stroke="#555" stroke-width="1.2"/></svg>
<svg style="left:1021px;top:704px;" width="5" height="9" viewBox="0 0 5 9"><path d="M0.3 3.5 L2.5 0.5 L4.7 3.5 Z M0.3 5.5 L2.5 8.5 L4.7 5.5 Z" fill="#555"/></svg>
<svg style="left:1057px;top:704px;" width="5" height="9" viewBox="0 0 5 9"><path d="M0.3 3.5 L2.5 0.5 L4.7 3.5 Z M0.3 5.5 L2.5 8.5 L4.7 5.5 Z" fill="#555"/></svg>
<svg style="left:1168px;top:704px;" width="5" height="9" viewBox="0 0 5 9"><path d="M0.3 3.5 L2.5 0.5 L4.7 3.5 Z M0.3 5.5 L2.5 8.5 L4.7 5.5 Z" fill="#555"/></svg>
<svg style="left:1180px;top:703px;" width="11" height="11" viewBox="0 0 11 11"><path d="M2 5 V3 A2.5 2.5 0 0 1 7 3" fill="none" stroke="#bbb" stroke-width="1"/><rect x="1" y="5" width="8" height="5.5" fill="#c8c8c8" stroke="#aaa" stroke-width="0.8"/></svg>
<svg style="left:1199px;top:702px;" width="12" height="14" viewBox="0 0 12 14"><rect x="2" y="0.5" width="8" height="6" rx="3" fill="#bbb" stroke="#999" stroke-width="0.8"/><rect x="1" y="6.5" width="10" height="6.5" fill="#c8c8c8" stroke="#999" stroke-width="0.8"/><path d="M3.5 3.5 H5 M7 3.5 H8.5" stroke="#777"/></svg>
<svg style="left:67px;top:108px;" width="12" height="12" viewBox="0 0 12 12"><rect x="0.5" y="0.5" width="5" height="11" fill="#5a9ad0"/><rect x="6.5" y="4" width="5" height="7.5" fill="#5a9ad0"/><rect x="1.5" y="7" width="3" height="3" fill="#e0a050"/></svg>
<svg style="left:67px;top:189px;" width="12" height="12" viewBox="0 0 12 12"><path d="M2 10 L6 2 L10 10 Z" fill="none" stroke="#a888c0" stroke-width="1"/><circle cx="6" cy="2.2" r="1.8" fill="#e06060"/><circle cx="2" cy="10" r="1.8" fill="#5a9ad0"/><circle cx="10" cy="10" r="1.8" fill="#e0a050"/></svg>
<svg style="left:67px;top:660px;" width="12" height="12" viewBox="0 0 12 12"><path d="M6 0.5 L7.6 4.3 L11.6 4.6 L8.6 7.3 L9.5 11.3 L6 9.2 L2.5 11.3 L3.4 7.3 L0.4 4.6 L4.4 4.3 Z" fill="#e0a030"/></svg>
<svg style="left:112px;top:474px;" width="8" height="3" viewBox="0 0 8 3"><path d="M0 2 L4 0 L8 2" fill="#888"/></svg>
<div style="left:132px;top:472.5px;width:8px;height:3.5px;background:#cf6a6a;"></div>
<div style="left:105px;top:695.5px;width:6px;height:1px;background:#333;"></div>
<div style="left:289px;top:695.5px;width:6px;height:1px;background:#333;"></div>
<div style="left:372px;top:695.5px;width:6px;height:1px;background:#333;"></div>
<div style="left:429px;top:695.5px;width:6px;height:1px;background:#333;"></div>
<div style="left:77px;top:99.5px;width:1px;height:6px;background:#333;"></div>
<div style="left:77px;top:180.5px;width:1px;height:6px;background:#333;"></div>
<div style="left:77px;top:652px;width:1px;height:6px;background:#333;"></div>
<div style="left:324.5px;top:584px;width:2px;height:13px;background:repeating-linear-gradient(#b8b8b8 0 1px, transparent 1px 2px);"></div>
</body></html>
